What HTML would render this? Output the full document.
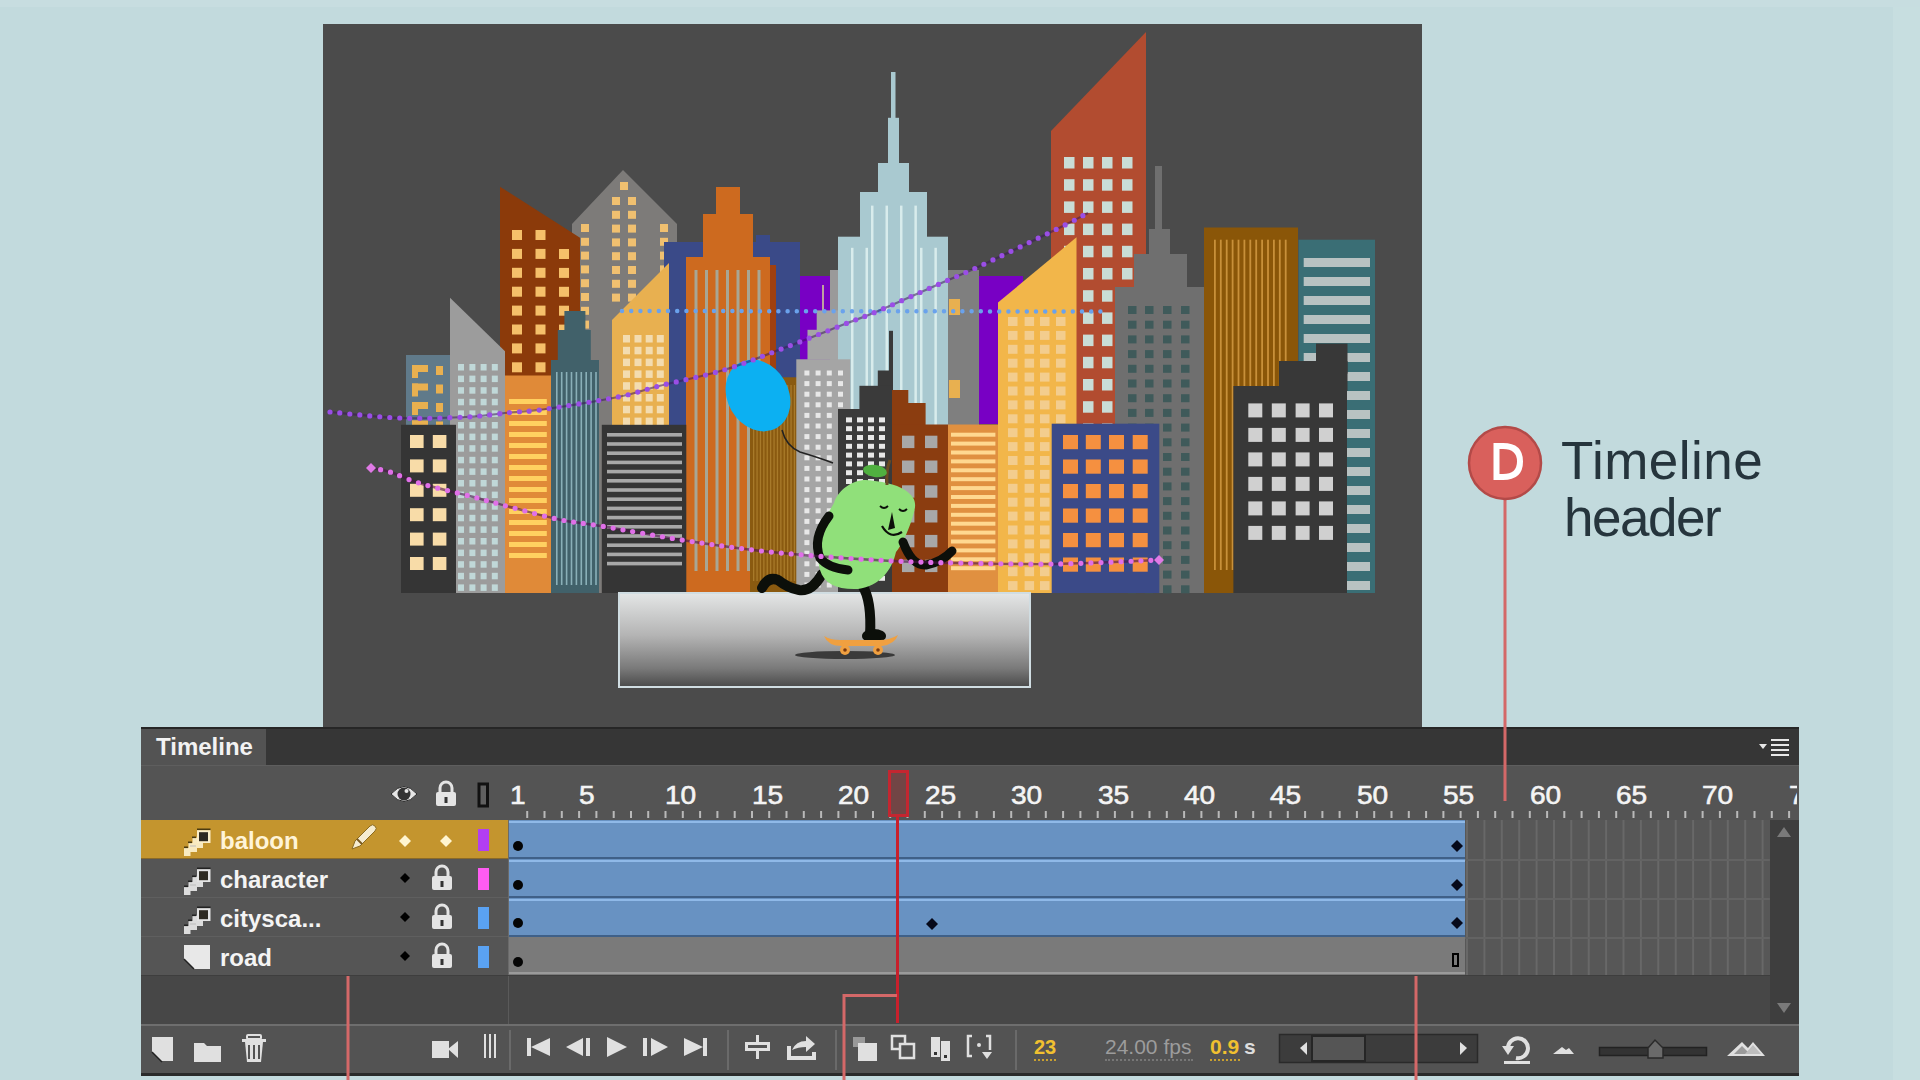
<!DOCTYPE html>
<html><head><meta charset="utf-8">
<style>
html,body{margin:0;padding:0;}
body{width:1920px;height:1080px;overflow:hidden;position:relative;background:#c2dadd;font-family:"Liberation Sans",sans-serif;}
.a{position:absolute;box-sizing:border-box;}
.t{position:absolute;white-space:nowrap;}
</style></head><body>
<svg class="a" style="left:0;top:0" width="1920" height="1080">
<rect x="0" y="0" width="1920" height="1080" fill="#c2dadd"/><rect x="1893" y="0" width="27" height="1080" fill="#c7dee0"/><rect x="0" y="0" width="1920" height="7" fill="#c7dde0"/>
<rect x="323" y="24" width="1099" height="710" fill="#4b4b4b"/>
<polygon points="572.0,224.0 623.0,170.0 677.0,224.0 677.0,593.0 572.0,593.0" fill="#7d7b79"/><rect x="620.0" y="182.0" width="8.0" height="8.0" fill="#f0c070"/><rect x="612.0" y="197.0" width="8.0" height="8.0" fill="#f0c070"/><rect x="628.0" y="197.0" width="8.0" height="8.0" fill="#f0c070"/><rect x="612.0" y="210.8" width="8.0" height="8.0" fill="#f0c070"/><rect x="628.0" y="210.8" width="8.0" height="8.0" fill="#f0c070"/><rect x="612.0" y="224.6" width="8.0" height="8.0" fill="#f0c070"/><rect x="628.0" y="224.6" width="8.0" height="8.0" fill="#f0c070"/><rect x="612.0" y="238.4" width="8.0" height="8.0" fill="#f0c070"/><rect x="628.0" y="238.4" width="8.0" height="8.0" fill="#f0c070"/><rect x="612.0" y="252.2" width="8.0" height="8.0" fill="#f0c070"/><rect x="628.0" y="252.2" width="8.0" height="8.0" fill="#f0c070"/><rect x="612.0" y="266.0" width="8.0" height="8.0" fill="#f0c070"/><rect x="628.0" y="266.0" width="8.0" height="8.0" fill="#f0c070"/><rect x="612.0" y="279.8" width="8.0" height="8.0" fill="#f0c070"/><rect x="628.0" y="279.8" width="8.0" height="8.0" fill="#f0c070"/><rect x="612.0" y="293.6" width="8.0" height="8.0" fill="#f0c070"/><rect x="628.0" y="293.6" width="8.0" height="8.0" fill="#f0c070"/><rect x="581.0" y="224.0" width="8.0" height="8.0" fill="#f0c070"/><rect x="660.0" y="224.0" width="8.0" height="8.0" fill="#f0c070"/><rect x="581.0" y="237.8" width="8.0" height="8.0" fill="#f0c070"/><rect x="660.0" y="237.8" width="8.0" height="8.0" fill="#f0c070"/><rect x="581.0" y="251.6" width="8.0" height="8.0" fill="#f0c070"/><rect x="660.0" y="251.6" width="8.0" height="8.0" fill="#f0c070"/><rect x="581.0" y="265.4" width="8.0" height="8.0" fill="#f0c070"/><rect x="660.0" y="265.4" width="8.0" height="8.0" fill="#f0c070"/><rect x="581.0" y="279.2" width="8.0" height="8.0" fill="#f0c070"/><rect x="660.0" y="279.2" width="8.0" height="8.0" fill="#f0c070"/><rect x="581.0" y="293.0" width="8.0" height="8.0" fill="#f0c070"/><rect x="660.0" y="293.0" width="8.0" height="8.0" fill="#f0c070"/><rect x="581.0" y="306.8" width="8.0" height="8.0" fill="#f0c070"/><rect x="660.0" y="306.8" width="8.0" height="8.0" fill="#f0c070"/><rect x="581.0" y="320.6" width="8.0" height="8.0" fill="#f0c070"/><rect x="660.0" y="320.6" width="8.0" height="8.0" fill="#f0c070"/><polygon points="1051.0,131.0 1146.0,32.0 1146.0,593.0 1051.0,593.0" fill="#b24c30"/><rect x="1064.0" y="157.0" width="10.5" height="11.5" fill="#c9ddd6"/><rect x="1083.0" y="157.0" width="10.5" height="11.5" fill="#c9ddd6"/><rect x="1102.0" y="157.0" width="10.5" height="11.5" fill="#c9ddd6"/><rect x="1122.0" y="157.0" width="10.5" height="11.5" fill="#c9ddd6"/><rect x="1064.0" y="179.2" width="10.5" height="11.5" fill="#c9ddd6"/><rect x="1083.0" y="179.2" width="10.5" height="11.5" fill="#c9ddd6"/><rect x="1102.0" y="179.2" width="10.5" height="11.5" fill="#c9ddd6"/><rect x="1122.0" y="179.2" width="10.5" height="11.5" fill="#c9ddd6"/><rect x="1064.0" y="201.4" width="10.5" height="11.5" fill="#c9ddd6"/><rect x="1083.0" y="201.4" width="10.5" height="11.5" fill="#c9ddd6"/><rect x="1102.0" y="201.4" width="10.5" height="11.5" fill="#c9ddd6"/><rect x="1122.0" y="201.4" width="10.5" height="11.5" fill="#c9ddd6"/><rect x="1064.0" y="223.6" width="10.5" height="11.5" fill="#c9ddd6"/><rect x="1083.0" y="223.6" width="10.5" height="11.5" fill="#c9ddd6"/><rect x="1102.0" y="223.6" width="10.5" height="11.5" fill="#c9ddd6"/><rect x="1122.0" y="223.6" width="10.5" height="11.5" fill="#c9ddd6"/><rect x="1064.0" y="245.8" width="10.5" height="11.5" fill="#c9ddd6"/><rect x="1083.0" y="245.8" width="10.5" height="11.5" fill="#c9ddd6"/><rect x="1102.0" y="245.8" width="10.5" height="11.5" fill="#c9ddd6"/><rect x="1122.0" y="245.8" width="10.5" height="11.5" fill="#c9ddd6"/><rect x="1064.0" y="268.0" width="10.5" height="11.5" fill="#c9ddd6"/><rect x="1083.0" y="268.0" width="10.5" height="11.5" fill="#c9ddd6"/><rect x="1102.0" y="268.0" width="10.5" height="11.5" fill="#c9ddd6"/><rect x="1122.0" y="268.0" width="10.5" height="11.5" fill="#c9ddd6"/><rect x="1064.0" y="290.2" width="10.5" height="11.5" fill="#c9ddd6"/><rect x="1083.0" y="290.2" width="10.5" height="11.5" fill="#c9ddd6"/><rect x="1102.0" y="290.2" width="10.5" height="11.5" fill="#c9ddd6"/><rect x="1122.0" y="290.2" width="10.5" height="11.5" fill="#c9ddd6"/><rect x="1064.0" y="312.4" width="10.5" height="11.5" fill="#c9ddd6"/><rect x="1083.0" y="312.4" width="10.5" height="11.5" fill="#c9ddd6"/><rect x="1102.0" y="312.4" width="10.5" height="11.5" fill="#c9ddd6"/><rect x="1122.0" y="312.4" width="10.5" height="11.5" fill="#c9ddd6"/><rect x="1064.0" y="334.6" width="10.5" height="11.5" fill="#c9ddd6"/><rect x="1083.0" y="334.6" width="10.5" height="11.5" fill="#c9ddd6"/><rect x="1102.0" y="334.6" width="10.5" height="11.5" fill="#c9ddd6"/><rect x="1122.0" y="334.6" width="10.5" height="11.5" fill="#c9ddd6"/><rect x="1064.0" y="356.8" width="10.5" height="11.5" fill="#c9ddd6"/><rect x="1083.0" y="356.8" width="10.5" height="11.5" fill="#c9ddd6"/><rect x="1102.0" y="356.8" width="10.5" height="11.5" fill="#c9ddd6"/><rect x="1122.0" y="356.8" width="10.5" height="11.5" fill="#c9ddd6"/><rect x="1064.0" y="379.0" width="10.5" height="11.5" fill="#c9ddd6"/><rect x="1083.0" y="379.0" width="10.5" height="11.5" fill="#c9ddd6"/><rect x="1102.0" y="379.0" width="10.5" height="11.5" fill="#c9ddd6"/><rect x="1122.0" y="379.0" width="10.5" height="11.5" fill="#c9ddd6"/><rect x="1064.0" y="401.2" width="10.5" height="11.5" fill="#c9ddd6"/><rect x="1083.0" y="401.2" width="10.5" height="11.5" fill="#c9ddd6"/><rect x="1102.0" y="401.2" width="10.5" height="11.5" fill="#c9ddd6"/><rect x="1122.0" y="401.2" width="10.5" height="11.5" fill="#c9ddd6"/><rect x="1064.0" y="423.4" width="10.5" height="11.5" fill="#c9ddd6"/><rect x="1083.0" y="423.4" width="10.5" height="11.5" fill="#c9ddd6"/><rect x="1102.0" y="423.4" width="10.5" height="11.5" fill="#c9ddd6"/><rect x="1122.0" y="423.4" width="10.5" height="11.5" fill="#c9ddd6"/><rect x="1064.0" y="445.6" width="10.5" height="11.5" fill="#c9ddd6"/><rect x="1083.0" y="445.6" width="10.5" height="11.5" fill="#c9ddd6"/><rect x="1102.0" y="445.6" width="10.5" height="11.5" fill="#c9ddd6"/><rect x="1122.0" y="445.6" width="10.5" height="11.5" fill="#c9ddd6"/><rect x="1064.0" y="467.8" width="10.5" height="11.5" fill="#c9ddd6"/><rect x="1083.0" y="467.8" width="10.5" height="11.5" fill="#c9ddd6"/><rect x="1102.0" y="467.8" width="10.5" height="11.5" fill="#c9ddd6"/><rect x="1122.0" y="467.8" width="10.5" height="11.5" fill="#c9ddd6"/><rect x="1064.0" y="490.0" width="10.5" height="11.5" fill="#c9ddd6"/><rect x="1083.0" y="490.0" width="10.5" height="11.5" fill="#c9ddd6"/><rect x="1102.0" y="490.0" width="10.5" height="11.5" fill="#c9ddd6"/><rect x="1122.0" y="490.0" width="10.5" height="11.5" fill="#c9ddd6"/><rect x="1064.0" y="512.2" width="10.5" height="11.5" fill="#c9ddd6"/><rect x="1083.0" y="512.2" width="10.5" height="11.5" fill="#c9ddd6"/><rect x="1102.0" y="512.2" width="10.5" height="11.5" fill="#c9ddd6"/><rect x="1122.0" y="512.2" width="10.5" height="11.5" fill="#c9ddd6"/><rect x="1064.0" y="534.4" width="10.5" height="11.5" fill="#c9ddd6"/><rect x="1083.0" y="534.4" width="10.5" height="11.5" fill="#c9ddd6"/><rect x="1102.0" y="534.4" width="10.5" height="11.5" fill="#c9ddd6"/><rect x="1122.0" y="534.4" width="10.5" height="11.5" fill="#c9ddd6"/><rect x="1064.0" y="556.6" width="10.5" height="11.5" fill="#c9ddd6"/><rect x="1083.0" y="556.6" width="10.5" height="11.5" fill="#c9ddd6"/><rect x="1102.0" y="556.6" width="10.5" height="11.5" fill="#c9ddd6"/><rect x="1122.0" y="556.6" width="10.5" height="11.5" fill="#c9ddd6"/><rect x="1064.0" y="578.8" width="10.5" height="11.5" fill="#c9ddd6"/><rect x="1083.0" y="578.8" width="10.5" height="11.5" fill="#c9ddd6"/><rect x="1102.0" y="578.8" width="10.5" height="11.5" fill="#c9ddd6"/><rect x="1122.0" y="578.8" width="10.5" height="11.5" fill="#c9ddd6"/><rect x="664.0" y="242.0" width="136.0" height="351.0" fill="#3a4a88"/><rect x="756.0" y="235.0" width="14.0" height="10.0" fill="#3a4a88"/><rect x="800.0" y="276.0" width="30.0" height="317.0" fill="#7800c4"/><rect x="979.0" y="276.0" width="44.0" height="148.0" fill="#7800c4"/><rect x="948.0" y="270.0" width="31.0" height="155.0" fill="#7f7f7f"/><rect x="949.0" y="299.0" width="11.0" height="16.0" fill="#e8b050"/><rect x="949.0" y="380.0" width="11.0" height="18.0" fill="#e8b050"/><rect x="830.0" y="270.0" width="8.0" height="90.0" fill="#9a9a9a"/><rect x="891.0" y="72.0" width="4.5" height="46.0" fill="#a9c9d0"/><rect x="888.0" y="117.8" width="11.0" height="46.0" fill="#a9c9d0"/><rect x="878.0" y="163.0" width="31.0" height="30.0" fill="#a9c9d0"/><rect x="860.0" y="192.0" width="67.0" height="45.0" fill="#a9c9d0"/><rect x="838.0" y="236.7" width="110.0" height="356.3" fill="#a9c9d0"/><rect x="871.0" y="205.6" width="2.5" height="387.4" fill="#d8ecec"/><rect x="885.5" y="205.6" width="2.5" height="387.4" fill="#d8ecec"/><rect x="900.0" y="205.6" width="2.5" height="387.4" fill="#d8ecec"/><rect x="914.4" y="205.6" width="2.5" height="387.4" fill="#d8ecec"/><rect x="851.0" y="247.8" width="2.5" height="345.2" fill="#d8ecec"/><rect x="865.5" y="247.8" width="2.5" height="345.2" fill="#d8ecec"/><rect x="920.0" y="247.8" width="2.5" height="345.2" fill="#d8ecec"/><rect x="934.4" y="247.8" width="2.5" height="345.2" fill="#d8ecec"/><rect x="716.0" y="187.0" width="24.0" height="30.0" fill="#cd6a1f"/><rect x="703.0" y="214.0" width="50.0" height="45.0" fill="#cd6a1f"/><rect x="686.0" y="257.0" width="84.0" height="336.0" fill="#cd6a1f"/><rect x="770.0" y="265.0" width="6.0" height="328.0" fill="#a0400f"/><rect x="694.5" y="270.0" width="3.0" height="301.0" fill="#a8a694"/><rect x="705.0" y="270.0" width="3.0" height="301.0" fill="#a8a694"/><rect x="715.5" y="270.0" width="3.0" height="301.0" fill="#a8a694"/><rect x="726.0" y="270.0" width="3.0" height="301.0" fill="#a8a694"/><rect x="736.5" y="270.0" width="3.0" height="301.0" fill="#a8a694"/><rect x="747.0" y="270.0" width="3.0" height="301.0" fill="#a8a694"/><rect x="757.5" y="270.0" width="3.0" height="301.0" fill="#a8a694"/><rect x="1155.0" y="166.0" width="7.0" height="64.0" fill="#6f6f6f"/><rect x="1149.0" y="229.0" width="21.0" height="26.0" fill="#6f6f6f"/><rect x="1134.0" y="254.0" width="53.0" height="34.0" fill="#6f6f6f"/><rect x="1115.0" y="287.0" width="89.0" height="306.0" fill="#6f6f6f"/><rect x="1128.0" y="306.0" width="8.5" height="8.0" fill="#3f5a5a"/><rect x="1145.0" y="306.0" width="8.5" height="8.0" fill="#3f5a5a"/><rect x="1163.0" y="306.0" width="8.5" height="8.0" fill="#3f5a5a"/><rect x="1181.0" y="306.0" width="8.5" height="8.0" fill="#3f5a5a"/><rect x="1128.0" y="320.7" width="8.5" height="8.0" fill="#3f5a5a"/><rect x="1145.0" y="320.7" width="8.5" height="8.0" fill="#3f5a5a"/><rect x="1163.0" y="320.7" width="8.5" height="8.0" fill="#3f5a5a"/><rect x="1181.0" y="320.7" width="8.5" height="8.0" fill="#3f5a5a"/><rect x="1128.0" y="335.4" width="8.5" height="8.0" fill="#3f5a5a"/><rect x="1145.0" y="335.4" width="8.5" height="8.0" fill="#3f5a5a"/><rect x="1163.0" y="335.4" width="8.5" height="8.0" fill="#3f5a5a"/><rect x="1181.0" y="335.4" width="8.5" height="8.0" fill="#3f5a5a"/><rect x="1128.0" y="350.1" width="8.5" height="8.0" fill="#3f5a5a"/><rect x="1145.0" y="350.1" width="8.5" height="8.0" fill="#3f5a5a"/><rect x="1163.0" y="350.1" width="8.5" height="8.0" fill="#3f5a5a"/><rect x="1181.0" y="350.1" width="8.5" height="8.0" fill="#3f5a5a"/><rect x="1128.0" y="364.8" width="8.5" height="8.0" fill="#3f5a5a"/><rect x="1145.0" y="364.8" width="8.5" height="8.0" fill="#3f5a5a"/><rect x="1163.0" y="364.8" width="8.5" height="8.0" fill="#3f5a5a"/><rect x="1181.0" y="364.8" width="8.5" height="8.0" fill="#3f5a5a"/><rect x="1128.0" y="379.5" width="8.5" height="8.0" fill="#3f5a5a"/><rect x="1145.0" y="379.5" width="8.5" height="8.0" fill="#3f5a5a"/><rect x="1163.0" y="379.5" width="8.5" height="8.0" fill="#3f5a5a"/><rect x="1181.0" y="379.5" width="8.5" height="8.0" fill="#3f5a5a"/><rect x="1128.0" y="394.2" width="8.5" height="8.0" fill="#3f5a5a"/><rect x="1145.0" y="394.2" width="8.5" height="8.0" fill="#3f5a5a"/><rect x="1163.0" y="394.2" width="8.5" height="8.0" fill="#3f5a5a"/><rect x="1181.0" y="394.2" width="8.5" height="8.0" fill="#3f5a5a"/><rect x="1128.0" y="408.9" width="8.5" height="8.0" fill="#3f5a5a"/><rect x="1145.0" y="408.9" width="8.5" height="8.0" fill="#3f5a5a"/><rect x="1163.0" y="408.9" width="8.5" height="8.0" fill="#3f5a5a"/><rect x="1181.0" y="408.9" width="8.5" height="8.0" fill="#3f5a5a"/><rect x="1128.0" y="423.6" width="8.5" height="8.0" fill="#3f5a5a"/><rect x="1145.0" y="423.6" width="8.5" height="8.0" fill="#3f5a5a"/><rect x="1163.0" y="423.6" width="8.5" height="8.0" fill="#3f5a5a"/><rect x="1181.0" y="423.6" width="8.5" height="8.0" fill="#3f5a5a"/><rect x="1128.0" y="438.3" width="8.5" height="8.0" fill="#3f5a5a"/><rect x="1145.0" y="438.3" width="8.5" height="8.0" fill="#3f5a5a"/><rect x="1163.0" y="438.3" width="8.5" height="8.0" fill="#3f5a5a"/><rect x="1181.0" y="438.3" width="8.5" height="8.0" fill="#3f5a5a"/><rect x="1128.0" y="453.0" width="8.5" height="8.0" fill="#3f5a5a"/><rect x="1145.0" y="453.0" width="8.5" height="8.0" fill="#3f5a5a"/><rect x="1163.0" y="453.0" width="8.5" height="8.0" fill="#3f5a5a"/><rect x="1181.0" y="453.0" width="8.5" height="8.0" fill="#3f5a5a"/><rect x="1128.0" y="467.7" width="8.5" height="8.0" fill="#3f5a5a"/><rect x="1145.0" y="467.7" width="8.5" height="8.0" fill="#3f5a5a"/><rect x="1163.0" y="467.7" width="8.5" height="8.0" fill="#3f5a5a"/><rect x="1181.0" y="467.7" width="8.5" height="8.0" fill="#3f5a5a"/><rect x="1128.0" y="482.4" width="8.5" height="8.0" fill="#3f5a5a"/><rect x="1145.0" y="482.4" width="8.5" height="8.0" fill="#3f5a5a"/><rect x="1163.0" y="482.4" width="8.5" height="8.0" fill="#3f5a5a"/><rect x="1181.0" y="482.4" width="8.5" height="8.0" fill="#3f5a5a"/><rect x="1128.0" y="497.1" width="8.5" height="8.0" fill="#3f5a5a"/><rect x="1145.0" y="497.1" width="8.5" height="8.0" fill="#3f5a5a"/><rect x="1163.0" y="497.1" width="8.5" height="8.0" fill="#3f5a5a"/><rect x="1181.0" y="497.1" width="8.5" height="8.0" fill="#3f5a5a"/><rect x="1128.0" y="511.8" width="8.5" height="8.0" fill="#3f5a5a"/><rect x="1145.0" y="511.8" width="8.5" height="8.0" fill="#3f5a5a"/><rect x="1163.0" y="511.8" width="8.5" height="8.0" fill="#3f5a5a"/><rect x="1181.0" y="511.8" width="8.5" height="8.0" fill="#3f5a5a"/><rect x="1128.0" y="526.5" width="8.5" height="8.0" fill="#3f5a5a"/><rect x="1145.0" y="526.5" width="8.5" height="8.0" fill="#3f5a5a"/><rect x="1163.0" y="526.5" width="8.5" height="8.0" fill="#3f5a5a"/><rect x="1181.0" y="526.5" width="8.5" height="8.0" fill="#3f5a5a"/><rect x="1128.0" y="541.2" width="8.5" height="8.0" fill="#3f5a5a"/><rect x="1145.0" y="541.2" width="8.5" height="8.0" fill="#3f5a5a"/><rect x="1163.0" y="541.2" width="8.5" height="8.0" fill="#3f5a5a"/><rect x="1181.0" y="541.2" width="8.5" height="8.0" fill="#3f5a5a"/><rect x="1128.0" y="555.9" width="8.5" height="8.0" fill="#3f5a5a"/><rect x="1145.0" y="555.9" width="8.5" height="8.0" fill="#3f5a5a"/><rect x="1163.0" y="555.9" width="8.5" height="8.0" fill="#3f5a5a"/><rect x="1181.0" y="555.9" width="8.5" height="8.0" fill="#3f5a5a"/><rect x="1128.0" y="570.6" width="8.5" height="8.0" fill="#3f5a5a"/><rect x="1145.0" y="570.6" width="8.5" height="8.0" fill="#3f5a5a"/><rect x="1163.0" y="570.6" width="8.5" height="8.0" fill="#3f5a5a"/><rect x="1181.0" y="570.6" width="8.5" height="8.0" fill="#3f5a5a"/><rect x="1128.0" y="585.3" width="8.5" height="8.0" fill="#3f5a5a"/><rect x="1145.0" y="585.3" width="8.5" height="8.0" fill="#3f5a5a"/><rect x="1163.0" y="585.3" width="8.5" height="8.0" fill="#3f5a5a"/><rect x="1181.0" y="585.3" width="8.5" height="8.0" fill="#3f5a5a"/><polygon points="998.0,302.5 1076.5,237.3 1076.5,593.0 998.0,593.0" fill="#f2b64a"/><rect x="1008.0" y="317.0" width="9.5" height="9.0" fill="#f3cd8e"/><rect x="1024.6" y="317.0" width="9.5" height="9.0" fill="#f3cd8e"/><rect x="1040.0" y="317.0" width="9.5" height="9.0" fill="#f3cd8e"/><rect x="1056.0" y="317.0" width="9.5" height="9.0" fill="#f3cd8e"/><rect x="1008.0" y="330.9" width="9.5" height="9.0" fill="#f3cd8e"/><rect x="1024.6" y="330.9" width="9.5" height="9.0" fill="#f3cd8e"/><rect x="1040.0" y="330.9" width="9.5" height="9.0" fill="#f3cd8e"/><rect x="1056.0" y="330.9" width="9.5" height="9.0" fill="#f3cd8e"/><rect x="1008.0" y="344.8" width="9.5" height="9.0" fill="#f3cd8e"/><rect x="1024.6" y="344.8" width="9.5" height="9.0" fill="#f3cd8e"/><rect x="1040.0" y="344.8" width="9.5" height="9.0" fill="#f3cd8e"/><rect x="1056.0" y="344.8" width="9.5" height="9.0" fill="#f3cd8e"/><rect x="1008.0" y="358.7" width="9.5" height="9.0" fill="#f3cd8e"/><rect x="1024.6" y="358.7" width="9.5" height="9.0" fill="#f3cd8e"/><rect x="1040.0" y="358.7" width="9.5" height="9.0" fill="#f3cd8e"/><rect x="1056.0" y="358.7" width="9.5" height="9.0" fill="#f3cd8e"/><rect x="1008.0" y="372.6" width="9.5" height="9.0" fill="#f3cd8e"/><rect x="1024.6" y="372.6" width="9.5" height="9.0" fill="#f3cd8e"/><rect x="1040.0" y="372.6" width="9.5" height="9.0" fill="#f3cd8e"/><rect x="1056.0" y="372.6" width="9.5" height="9.0" fill="#f3cd8e"/><rect x="1008.0" y="386.5" width="9.5" height="9.0" fill="#f3cd8e"/><rect x="1024.6" y="386.5" width="9.5" height="9.0" fill="#f3cd8e"/><rect x="1040.0" y="386.5" width="9.5" height="9.0" fill="#f3cd8e"/><rect x="1056.0" y="386.5" width="9.5" height="9.0" fill="#f3cd8e"/><rect x="1008.0" y="400.4" width="9.5" height="9.0" fill="#f3cd8e"/><rect x="1024.6" y="400.4" width="9.5" height="9.0" fill="#f3cd8e"/><rect x="1040.0" y="400.4" width="9.5" height="9.0" fill="#f3cd8e"/><rect x="1056.0" y="400.4" width="9.5" height="9.0" fill="#f3cd8e"/><rect x="1008.0" y="414.3" width="9.5" height="9.0" fill="#f3cd8e"/><rect x="1024.6" y="414.3" width="9.5" height="9.0" fill="#f3cd8e"/><rect x="1040.0" y="414.3" width="9.5" height="9.0" fill="#f3cd8e"/><rect x="1056.0" y="414.3" width="9.5" height="9.0" fill="#f3cd8e"/><rect x="1008.0" y="428.2" width="9.5" height="9.0" fill="#f3cd8e"/><rect x="1024.6" y="428.2" width="9.5" height="9.0" fill="#f3cd8e"/><rect x="1040.0" y="428.2" width="9.5" height="9.0" fill="#f3cd8e"/><rect x="1056.0" y="428.2" width="9.5" height="9.0" fill="#f3cd8e"/><rect x="1008.0" y="442.1" width="9.5" height="9.0" fill="#f3cd8e"/><rect x="1024.6" y="442.1" width="9.5" height="9.0" fill="#f3cd8e"/><rect x="1040.0" y="442.1" width="9.5" height="9.0" fill="#f3cd8e"/><rect x="1056.0" y="442.1" width="9.5" height="9.0" fill="#f3cd8e"/><rect x="1008.0" y="456.0" width="9.5" height="9.0" fill="#f3cd8e"/><rect x="1024.6" y="456.0" width="9.5" height="9.0" fill="#f3cd8e"/><rect x="1040.0" y="456.0" width="9.5" height="9.0" fill="#f3cd8e"/><rect x="1056.0" y="456.0" width="9.5" height="9.0" fill="#f3cd8e"/><rect x="1008.0" y="469.9" width="9.5" height="9.0" fill="#f3cd8e"/><rect x="1024.6" y="469.9" width="9.5" height="9.0" fill="#f3cd8e"/><rect x="1040.0" y="469.9" width="9.5" height="9.0" fill="#f3cd8e"/><rect x="1056.0" y="469.9" width="9.5" height="9.0" fill="#f3cd8e"/><rect x="1008.0" y="483.8" width="9.5" height="9.0" fill="#f3cd8e"/><rect x="1024.6" y="483.8" width="9.5" height="9.0" fill="#f3cd8e"/><rect x="1040.0" y="483.8" width="9.5" height="9.0" fill="#f3cd8e"/><rect x="1056.0" y="483.8" width="9.5" height="9.0" fill="#f3cd8e"/><rect x="1008.0" y="497.7" width="9.5" height="9.0" fill="#f3cd8e"/><rect x="1024.6" y="497.7" width="9.5" height="9.0" fill="#f3cd8e"/><rect x="1040.0" y="497.7" width="9.5" height="9.0" fill="#f3cd8e"/><rect x="1056.0" y="497.7" width="9.5" height="9.0" fill="#f3cd8e"/><rect x="1008.0" y="511.6" width="9.5" height="9.0" fill="#f3cd8e"/><rect x="1024.6" y="511.6" width="9.5" height="9.0" fill="#f3cd8e"/><rect x="1040.0" y="511.6" width="9.5" height="9.0" fill="#f3cd8e"/><rect x="1056.0" y="511.6" width="9.5" height="9.0" fill="#f3cd8e"/><rect x="1008.0" y="525.5" width="9.5" height="9.0" fill="#f3cd8e"/><rect x="1024.6" y="525.5" width="9.5" height="9.0" fill="#f3cd8e"/><rect x="1040.0" y="525.5" width="9.5" height="9.0" fill="#f3cd8e"/><rect x="1056.0" y="525.5" width="9.5" height="9.0" fill="#f3cd8e"/><rect x="1008.0" y="539.4" width="9.5" height="9.0" fill="#f3cd8e"/><rect x="1024.6" y="539.4" width="9.5" height="9.0" fill="#f3cd8e"/><rect x="1040.0" y="539.4" width="9.5" height="9.0" fill="#f3cd8e"/><rect x="1056.0" y="539.4" width="9.5" height="9.0" fill="#f3cd8e"/><rect x="1008.0" y="553.3" width="9.5" height="9.0" fill="#f3cd8e"/><rect x="1024.6" y="553.3" width="9.5" height="9.0" fill="#f3cd8e"/><rect x="1040.0" y="553.3" width="9.5" height="9.0" fill="#f3cd8e"/><rect x="1056.0" y="553.3" width="9.5" height="9.0" fill="#f3cd8e"/><rect x="1008.0" y="567.2" width="9.5" height="9.0" fill="#f3cd8e"/><rect x="1024.6" y="567.2" width="9.5" height="9.0" fill="#f3cd8e"/><rect x="1040.0" y="567.2" width="9.5" height="9.0" fill="#f3cd8e"/><rect x="1056.0" y="567.2" width="9.5" height="9.0" fill="#f3cd8e"/><rect x="1008.0" y="581.1" width="9.5" height="9.0" fill="#f3cd8e"/><rect x="1024.6" y="581.1" width="9.5" height="9.0" fill="#f3cd8e"/><rect x="1040.0" y="581.1" width="9.5" height="9.0" fill="#f3cd8e"/><rect x="1056.0" y="581.1" width="9.5" height="9.0" fill="#f3cd8e"/><rect x="1204.0" y="227.5" width="94.0" height="365.5" fill="#8a5608"/><rect x="1214.0" y="239.7" width="1.8" height="330.3" fill="#c8903a"/><rect x="1219.9" y="239.7" width="1.8" height="330.3" fill="#c8903a"/><rect x="1225.8" y="239.7" width="1.8" height="330.3" fill="#c8903a"/><rect x="1231.7" y="239.7" width="1.8" height="330.3" fill="#c8903a"/><rect x="1237.6" y="239.7" width="1.8" height="330.3" fill="#c8903a"/><rect x="1243.5" y="239.7" width="1.8" height="330.3" fill="#c8903a"/><rect x="1249.4" y="239.7" width="1.8" height="330.3" fill="#c8903a"/><rect x="1255.3" y="239.7" width="1.8" height="330.3" fill="#c8903a"/><rect x="1261.2" y="239.7" width="1.8" height="330.3" fill="#c8903a"/><rect x="1267.1" y="239.7" width="1.8" height="330.3" fill="#c8903a"/><rect x="1273.0" y="239.7" width="1.8" height="330.3" fill="#c8903a"/><rect x="1278.9" y="239.7" width="1.8" height="330.3" fill="#c8903a"/><rect x="1284.8" y="239.7" width="1.8" height="330.3" fill="#c8903a"/><rect x="1298.6" y="239.7" width="76.4" height="353.3" fill="#3a6e75"/><rect x="1303.7" y="258.0" width="66.3" height="9.0" fill="#b8c2c2"/><rect x="1303.7" y="277.0" width="66.3" height="9.0" fill="#b8c2c2"/><rect x="1303.7" y="296.0" width="66.3" height="9.0" fill="#b8c2c2"/><rect x="1303.7" y="315.0" width="66.3" height="9.0" fill="#b8c2c2"/><rect x="1303.7" y="334.0" width="66.3" height="9.0" fill="#b8c2c2"/><rect x="1303.7" y="353.0" width="66.3" height="9.0" fill="#b8c2c2"/><rect x="1303.7" y="372.0" width="66.3" height="9.0" fill="#b8c2c2"/><rect x="1303.7" y="391.0" width="66.3" height="9.0" fill="#b8c2c2"/><rect x="1303.7" y="410.0" width="66.3" height="9.0" fill="#b8c2c2"/><rect x="1303.7" y="429.0" width="66.3" height="9.0" fill="#b8c2c2"/><rect x="1303.7" y="448.0" width="66.3" height="9.0" fill="#b8c2c2"/><rect x="1303.7" y="467.0" width="66.3" height="9.0" fill="#b8c2c2"/><rect x="1303.7" y="486.0" width="66.3" height="9.0" fill="#b8c2c2"/><rect x="1303.7" y="505.0" width="66.3" height="9.0" fill="#b8c2c2"/><rect x="1303.7" y="524.0" width="66.3" height="9.0" fill="#b8c2c2"/><rect x="1303.7" y="543.0" width="66.3" height="9.0" fill="#b8c2c2"/><rect x="1303.7" y="562.0" width="66.3" height="9.0" fill="#b8c2c2"/><rect x="1303.7" y="581.0" width="66.3" height="9.0" fill="#b8c2c2"/><rect x="1316.0" y="343.6" width="31.5" height="30.0" fill="#383838"/><rect x="1279.0" y="361.0" width="68.5" height="30.0" fill="#383838"/><rect x="1233.4" y="386.0" width="113.6" height="207.0" fill="#383838"/><rect x="1248.3" y="403.4" width="14.0" height="14.0" fill="#d0d0d0"/><rect x="1271.8" y="403.4" width="14.0" height="14.0" fill="#d0d0d0"/><rect x="1295.6" y="403.4" width="14.0" height="14.0" fill="#d0d0d0"/><rect x="1319.0" y="403.4" width="14.0" height="14.0" fill="#d0d0d0"/><rect x="1248.3" y="427.9" width="14.0" height="14.0" fill="#d0d0d0"/><rect x="1271.8" y="427.9" width="14.0" height="14.0" fill="#d0d0d0"/><rect x="1295.6" y="427.9" width="14.0" height="14.0" fill="#d0d0d0"/><rect x="1319.0" y="427.9" width="14.0" height="14.0" fill="#d0d0d0"/><rect x="1248.3" y="452.4" width="14.0" height="14.0" fill="#d0d0d0"/><rect x="1271.8" y="452.4" width="14.0" height="14.0" fill="#d0d0d0"/><rect x="1295.6" y="452.4" width="14.0" height="14.0" fill="#d0d0d0"/><rect x="1319.0" y="452.4" width="14.0" height="14.0" fill="#d0d0d0"/><rect x="1248.3" y="476.9" width="14.0" height="14.0" fill="#d0d0d0"/><rect x="1271.8" y="476.9" width="14.0" height="14.0" fill="#d0d0d0"/><rect x="1295.6" y="476.9" width="14.0" height="14.0" fill="#d0d0d0"/><rect x="1319.0" y="476.9" width="14.0" height="14.0" fill="#d0d0d0"/><rect x="1248.3" y="501.4" width="14.0" height="14.0" fill="#d0d0d0"/><rect x="1271.8" y="501.4" width="14.0" height="14.0" fill="#d0d0d0"/><rect x="1295.6" y="501.4" width="14.0" height="14.0" fill="#d0d0d0"/><rect x="1319.0" y="501.4" width="14.0" height="14.0" fill="#d0d0d0"/><rect x="1248.3" y="525.9" width="14.0" height="14.0" fill="#d0d0d0"/><rect x="1271.8" y="525.9" width="14.0" height="14.0" fill="#d0d0d0"/><rect x="1295.6" y="525.9" width="14.0" height="14.0" fill="#d0d0d0"/><rect x="1319.0" y="525.9" width="14.0" height="14.0" fill="#d0d0d0"/><rect x="1051.7" y="423.7" width="107.6" height="169.3" fill="#3b4a88"/><rect x="1063.0" y="435.0" width="15.0" height="14.2" fill="#f59040"/><rect x="1085.8" y="435.0" width="15.0" height="14.2" fill="#f59040"/><rect x="1109.0" y="435.0" width="15.0" height="14.2" fill="#f59040"/><rect x="1132.7" y="435.0" width="15.0" height="14.2" fill="#f59040"/><rect x="1063.0" y="459.5" width="15.0" height="14.2" fill="#f59040"/><rect x="1085.8" y="459.5" width="15.0" height="14.2" fill="#f59040"/><rect x="1109.0" y="459.5" width="15.0" height="14.2" fill="#f59040"/><rect x="1132.7" y="459.5" width="15.0" height="14.2" fill="#f59040"/><rect x="1063.0" y="484.0" width="15.0" height="14.2" fill="#f59040"/><rect x="1085.8" y="484.0" width="15.0" height="14.2" fill="#f59040"/><rect x="1109.0" y="484.0" width="15.0" height="14.2" fill="#f59040"/><rect x="1132.7" y="484.0" width="15.0" height="14.2" fill="#f59040"/><rect x="1063.0" y="508.5" width="15.0" height="14.2" fill="#f59040"/><rect x="1085.8" y="508.5" width="15.0" height="14.2" fill="#f59040"/><rect x="1109.0" y="508.5" width="15.0" height="14.2" fill="#f59040"/><rect x="1132.7" y="508.5" width="15.0" height="14.2" fill="#f59040"/><rect x="1063.0" y="533.0" width="15.0" height="14.2" fill="#f59040"/><rect x="1085.8" y="533.0" width="15.0" height="14.2" fill="#f59040"/><rect x="1109.0" y="533.0" width="15.0" height="14.2" fill="#f59040"/><rect x="1132.7" y="533.0" width="15.0" height="14.2" fill="#f59040"/><rect x="1063.0" y="557.5" width="15.0" height="14.2" fill="#f59040"/><rect x="1085.8" y="557.5" width="15.0" height="14.2" fill="#f59040"/><rect x="1109.0" y="557.5" width="15.0" height="14.2" fill="#f59040"/><rect x="1132.7" y="557.5" width="15.0" height="14.2" fill="#f59040"/><polygon points="500.0,186.7 580.0,237.8 580.0,593.0 500.0,593.0" fill="#8b3a0a"/><rect x="512.0" y="230.0" width="10.0" height="10.0" fill="#f5c06a"/><rect x="535.5" y="230.0" width="10.0" height="10.0" fill="#f5c06a"/><rect x="512.0" y="248.9" width="10.0" height="10.0" fill="#f5c06a"/><rect x="535.5" y="248.9" width="10.0" height="10.0" fill="#f5c06a"/><rect x="512.0" y="267.8" width="10.0" height="10.0" fill="#f5c06a"/><rect x="535.5" y="267.8" width="10.0" height="10.0" fill="#f5c06a"/><rect x="512.0" y="286.7" width="10.0" height="10.0" fill="#f5c06a"/><rect x="535.5" y="286.7" width="10.0" height="10.0" fill="#f5c06a"/><rect x="512.0" y="305.6" width="10.0" height="10.0" fill="#f5c06a"/><rect x="535.5" y="305.6" width="10.0" height="10.0" fill="#f5c06a"/><rect x="512.0" y="324.5" width="10.0" height="10.0" fill="#f5c06a"/><rect x="535.5" y="324.5" width="10.0" height="10.0" fill="#f5c06a"/><rect x="512.0" y="343.4" width="10.0" height="10.0" fill="#f5c06a"/><rect x="535.5" y="343.4" width="10.0" height="10.0" fill="#f5c06a"/><rect x="512.0" y="362.3" width="10.0" height="10.0" fill="#f5c06a"/><rect x="535.5" y="362.3" width="10.0" height="10.0" fill="#f5c06a"/><rect x="512.0" y="381.2" width="10.0" height="10.0" fill="#f5c06a"/><rect x="535.5" y="381.2" width="10.0" height="10.0" fill="#f5c06a"/><rect x="559.0" y="249.0" width="10.0" height="10.0" fill="#f5c06a"/><rect x="559.0" y="267.9" width="10.0" height="10.0" fill="#f5c06a"/><rect x="559.0" y="286.8" width="10.0" height="10.0" fill="#f5c06a"/><rect x="559.0" y="305.7" width="10.0" height="10.0" fill="#f5c06a"/><rect x="559.0" y="324.6" width="10.0" height="10.0" fill="#f5c06a"/><rect x="559.0" y="343.5" width="10.0" height="10.0" fill="#f5c06a"/><rect x="559.0" y="362.4" width="10.0" height="10.0" fill="#f5c06a"/><polygon points="450.0,297.7 505.0,351.3 505.0,593.0 450.0,593.0" fill="#9c9c9c"/><rect x="458.0" y="364.0" width="6.0" height="6.5" fill="#c0d8d8"/><rect x="469.4" y="364.0" width="6.0" height="6.5" fill="#c0d8d8"/><rect x="480.6" y="364.0" width="6.0" height="6.5" fill="#c0d8d8"/><rect x="491.8" y="364.0" width="6.0" height="6.5" fill="#c0d8d8"/><rect x="458.0" y="375.6" width="6.0" height="6.5" fill="#c0d8d8"/><rect x="469.4" y="375.6" width="6.0" height="6.5" fill="#c0d8d8"/><rect x="480.6" y="375.6" width="6.0" height="6.5" fill="#c0d8d8"/><rect x="491.8" y="375.6" width="6.0" height="6.5" fill="#c0d8d8"/><rect x="458.0" y="387.2" width="6.0" height="6.5" fill="#c0d8d8"/><rect x="469.4" y="387.2" width="6.0" height="6.5" fill="#c0d8d8"/><rect x="480.6" y="387.2" width="6.0" height="6.5" fill="#c0d8d8"/><rect x="491.8" y="387.2" width="6.0" height="6.5" fill="#c0d8d8"/><rect x="458.0" y="398.8" width="6.0" height="6.5" fill="#c0d8d8"/><rect x="469.4" y="398.8" width="6.0" height="6.5" fill="#c0d8d8"/><rect x="480.6" y="398.8" width="6.0" height="6.5" fill="#c0d8d8"/><rect x="491.8" y="398.8" width="6.0" height="6.5" fill="#c0d8d8"/><rect x="458.0" y="410.4" width="6.0" height="6.5" fill="#c0d8d8"/><rect x="469.4" y="410.4" width="6.0" height="6.5" fill="#c0d8d8"/><rect x="480.6" y="410.4" width="6.0" height="6.5" fill="#c0d8d8"/><rect x="491.8" y="410.4" width="6.0" height="6.5" fill="#c0d8d8"/><rect x="458.0" y="422.0" width="6.0" height="6.5" fill="#c0d8d8"/><rect x="469.4" y="422.0" width="6.0" height="6.5" fill="#c0d8d8"/><rect x="480.6" y="422.0" width="6.0" height="6.5" fill="#c0d8d8"/><rect x="491.8" y="422.0" width="6.0" height="6.5" fill="#c0d8d8"/><rect x="458.0" y="433.6" width="6.0" height="6.5" fill="#c0d8d8"/><rect x="469.4" y="433.6" width="6.0" height="6.5" fill="#c0d8d8"/><rect x="480.6" y="433.6" width="6.0" height="6.5" fill="#c0d8d8"/><rect x="491.8" y="433.6" width="6.0" height="6.5" fill="#c0d8d8"/><rect x="458.0" y="445.2" width="6.0" height="6.5" fill="#c0d8d8"/><rect x="469.4" y="445.2" width="6.0" height="6.5" fill="#c0d8d8"/><rect x="480.6" y="445.2" width="6.0" height="6.5" fill="#c0d8d8"/><rect x="491.8" y="445.2" width="6.0" height="6.5" fill="#c0d8d8"/><rect x="458.0" y="456.8" width="6.0" height="6.5" fill="#c0d8d8"/><rect x="469.4" y="456.8" width="6.0" height="6.5" fill="#c0d8d8"/><rect x="480.6" y="456.8" width="6.0" height="6.5" fill="#c0d8d8"/><rect x="491.8" y="456.8" width="6.0" height="6.5" fill="#c0d8d8"/><rect x="458.0" y="468.4" width="6.0" height="6.5" fill="#c0d8d8"/><rect x="469.4" y="468.4" width="6.0" height="6.5" fill="#c0d8d8"/><rect x="480.6" y="468.4" width="6.0" height="6.5" fill="#c0d8d8"/><rect x="491.8" y="468.4" width="6.0" height="6.5" fill="#c0d8d8"/><rect x="458.0" y="480.0" width="6.0" height="6.5" fill="#c0d8d8"/><rect x="469.4" y="480.0" width="6.0" height="6.5" fill="#c0d8d8"/><rect x="480.6" y="480.0" width="6.0" height="6.5" fill="#c0d8d8"/><rect x="491.8" y="480.0" width="6.0" height="6.5" fill="#c0d8d8"/><rect x="458.0" y="491.6" width="6.0" height="6.5" fill="#c0d8d8"/><rect x="469.4" y="491.6" width="6.0" height="6.5" fill="#c0d8d8"/><rect x="480.6" y="491.6" width="6.0" height="6.5" fill="#c0d8d8"/><rect x="491.8" y="491.6" width="6.0" height="6.5" fill="#c0d8d8"/><rect x="458.0" y="503.2" width="6.0" height="6.5" fill="#c0d8d8"/><rect x="469.4" y="503.2" width="6.0" height="6.5" fill="#c0d8d8"/><rect x="480.6" y="503.2" width="6.0" height="6.5" fill="#c0d8d8"/><rect x="491.8" y="503.2" width="6.0" height="6.5" fill="#c0d8d8"/><rect x="458.0" y="514.8" width="6.0" height="6.5" fill="#c0d8d8"/><rect x="469.4" y="514.8" width="6.0" height="6.5" fill="#c0d8d8"/><rect x="480.6" y="514.8" width="6.0" height="6.5" fill="#c0d8d8"/><rect x="491.8" y="514.8" width="6.0" height="6.5" fill="#c0d8d8"/><rect x="458.0" y="526.4" width="6.0" height="6.5" fill="#c0d8d8"/><rect x="469.4" y="526.4" width="6.0" height="6.5" fill="#c0d8d8"/><rect x="480.6" y="526.4" width="6.0" height="6.5" fill="#c0d8d8"/><rect x="491.8" y="526.4" width="6.0" height="6.5" fill="#c0d8d8"/><rect x="458.0" y="538.0" width="6.0" height="6.5" fill="#c0d8d8"/><rect x="469.4" y="538.0" width="6.0" height="6.5" fill="#c0d8d8"/><rect x="480.6" y="538.0" width="6.0" height="6.5" fill="#c0d8d8"/><rect x="491.8" y="538.0" width="6.0" height="6.5" fill="#c0d8d8"/><rect x="458.0" y="549.6" width="6.0" height="6.5" fill="#c0d8d8"/><rect x="469.4" y="549.6" width="6.0" height="6.5" fill="#c0d8d8"/><rect x="480.6" y="549.6" width="6.0" height="6.5" fill="#c0d8d8"/><rect x="491.8" y="549.6" width="6.0" height="6.5" fill="#c0d8d8"/><rect x="458.0" y="561.2" width="6.0" height="6.5" fill="#c0d8d8"/><rect x="469.4" y="561.2" width="6.0" height="6.5" fill="#c0d8d8"/><rect x="480.6" y="561.2" width="6.0" height="6.5" fill="#c0d8d8"/><rect x="491.8" y="561.2" width="6.0" height="6.5" fill="#c0d8d8"/><rect x="458.0" y="572.8" width="6.0" height="6.5" fill="#c0d8d8"/><rect x="469.4" y="572.8" width="6.0" height="6.5" fill="#c0d8d8"/><rect x="480.6" y="572.8" width="6.0" height="6.5" fill="#c0d8d8"/><rect x="491.8" y="572.8" width="6.0" height="6.5" fill="#c0d8d8"/><rect x="458.0" y="584.4" width="6.0" height="6.5" fill="#c0d8d8"/><rect x="469.4" y="584.4" width="6.0" height="6.5" fill="#c0d8d8"/><rect x="480.6" y="584.4" width="6.0" height="6.5" fill="#c0d8d8"/><rect x="491.8" y="584.4" width="6.0" height="6.5" fill="#c0d8d8"/><rect x="406.0" y="355.0" width="44.0" height="238.0" fill="#607a8a"/><rect x="412.0" y="365.0" width="16.0" height="7.0" fill="#e8b050"/><rect x="412.0" y="383.5" width="16.0" height="7.0" fill="#e8b050"/><rect x="412.0" y="402.0" width="16.0" height="7.0" fill="#e8b050"/><rect x="412.0" y="420.5" width="16.0" height="7.0" fill="#e8b050"/><rect x="412.0" y="365.0" width="6.0" height="13.0" fill="#e8b050"/><rect x="412.0" y="383.5" width="6.0" height="13.0" fill="#e8b050"/><rect x="412.0" y="402.0" width="6.0" height="13.0" fill="#e8b050"/><rect x="412.0" y="420.5" width="6.0" height="13.0" fill="#e8b050"/><rect x="436.0" y="366.0" width="7.0" height="9.0" fill="#e8b050"/><rect x="436.0" y="384.5" width="7.0" height="9.0" fill="#e8b050"/><rect x="436.0" y="403.0" width="7.0" height="9.0" fill="#e8b050"/><rect x="436.0" y="421.5" width="7.0" height="9.0" fill="#e8b050"/><rect x="401.0" y="424.8" width="55.0" height="168.2" fill="#353535"/><rect x="410.0" y="435.0" width="13.6" height="13.0" fill="#f8dca8"/><rect x="432.8" y="435.0" width="13.6" height="13.0" fill="#f8dca8"/><rect x="410.0" y="459.4" width="13.6" height="13.0" fill="#f8dca8"/><rect x="432.8" y="459.4" width="13.6" height="13.0" fill="#f8dca8"/><rect x="410.0" y="483.8" width="13.6" height="13.0" fill="#f8dca8"/><rect x="432.8" y="483.8" width="13.6" height="13.0" fill="#f8dca8"/><rect x="410.0" y="508.2" width="13.6" height="13.0" fill="#f8dca8"/><rect x="432.8" y="508.2" width="13.6" height="13.0" fill="#f8dca8"/><rect x="410.0" y="532.6" width="13.6" height="13.0" fill="#f8dca8"/><rect x="432.8" y="532.6" width="13.6" height="13.0" fill="#f8dca8"/><rect x="410.0" y="557.0" width="13.6" height="13.0" fill="#f8dca8"/><rect x="432.8" y="557.0" width="13.6" height="13.0" fill="#f8dca8"/><rect x="505.0" y="375.5" width="49.0" height="217.5" fill="#e08a38"/><rect x="509.0" y="399.0" width="37.8" height="5.0" fill="#ffd060"/><rect x="509.0" y="410.0" width="37.8" height="5.0" fill="#ffd060"/><rect x="509.0" y="421.0" width="37.8" height="5.0" fill="#ffd060"/><rect x="509.0" y="432.0" width="37.8" height="5.0" fill="#ffd060"/><rect x="509.0" y="443.0" width="37.8" height="5.0" fill="#ffd060"/><rect x="509.0" y="454.0" width="37.8" height="5.0" fill="#ffd060"/><rect x="509.0" y="465.0" width="37.8" height="5.0" fill="#ffd060"/><rect x="509.0" y="476.0" width="37.8" height="5.0" fill="#ffd060"/><rect x="509.0" y="487.0" width="37.8" height="5.0" fill="#ffd060"/><rect x="509.0" y="498.0" width="37.8" height="5.0" fill="#ffd060"/><rect x="509.0" y="509.0" width="37.8" height="5.0" fill="#ffd060"/><rect x="509.0" y="520.0" width="37.8" height="5.0" fill="#ffd060"/><rect x="509.0" y="531.0" width="37.8" height="5.0" fill="#ffd060"/><rect x="509.0" y="542.0" width="37.8" height="5.0" fill="#ffd060"/><rect x="509.0" y="553.0" width="37.8" height="5.0" fill="#ffd060"/><rect x="564.4" y="311.0" width="21.0" height="20.0" fill="#41616a"/><rect x="557.8" y="330.0" width="33.0" height="31.0" fill="#41616a"/><rect x="551.0" y="360.0" width="48.0" height="233.0" fill="#41616a"/><rect x="556.0" y="372.0" width="1.6" height="213.0" fill="#8ab0b8"/><rect x="560.9" y="372.0" width="1.6" height="213.0" fill="#8ab0b8"/><rect x="565.8" y="372.0" width="1.6" height="213.0" fill="#8ab0b8"/><rect x="570.7" y="372.0" width="1.6" height="213.0" fill="#8ab0b8"/><rect x="575.6" y="372.0" width="1.6" height="213.0" fill="#8ab0b8"/><rect x="580.5" y="372.0" width="1.6" height="213.0" fill="#8ab0b8"/><rect x="585.4" y="372.0" width="1.6" height="213.0" fill="#8ab0b8"/><rect x="590.3" y="372.0" width="1.6" height="213.0" fill="#8ab0b8"/><rect x="595.2" y="372.0" width="1.6" height="213.0" fill="#8ab0b8"/><polygon points="612.0,320.0 669.0,263.0 669.0,593.0 612.0,593.0" fill="#e8b050"/><rect x="623.0" y="335.0" width="7.0" height="7.5" fill="#f3dcb0"/><rect x="634.5" y="335.0" width="7.0" height="7.5" fill="#f3dcb0"/><rect x="645.7" y="335.0" width="7.0" height="7.5" fill="#f3dcb0"/><rect x="656.8" y="335.0" width="7.0" height="7.5" fill="#f3dcb0"/><rect x="623.0" y="346.8" width="7.0" height="7.5" fill="#f3dcb0"/><rect x="634.5" y="346.8" width="7.0" height="7.5" fill="#f3dcb0"/><rect x="645.7" y="346.8" width="7.0" height="7.5" fill="#f3dcb0"/><rect x="656.8" y="346.8" width="7.0" height="7.5" fill="#f3dcb0"/><rect x="623.0" y="358.6" width="7.0" height="7.5" fill="#f3dcb0"/><rect x="634.5" y="358.6" width="7.0" height="7.5" fill="#f3dcb0"/><rect x="645.7" y="358.6" width="7.0" height="7.5" fill="#f3dcb0"/><rect x="656.8" y="358.6" width="7.0" height="7.5" fill="#f3dcb0"/><rect x="623.0" y="370.4" width="7.0" height="7.5" fill="#f3dcb0"/><rect x="634.5" y="370.4" width="7.0" height="7.5" fill="#f3dcb0"/><rect x="645.7" y="370.4" width="7.0" height="7.5" fill="#f3dcb0"/><rect x="656.8" y="370.4" width="7.0" height="7.5" fill="#f3dcb0"/><rect x="623.0" y="382.2" width="7.0" height="7.5" fill="#f3dcb0"/><rect x="634.5" y="382.2" width="7.0" height="7.5" fill="#f3dcb0"/><rect x="645.7" y="382.2" width="7.0" height="7.5" fill="#f3dcb0"/><rect x="656.8" y="382.2" width="7.0" height="7.5" fill="#f3dcb0"/><rect x="623.0" y="394.0" width="7.0" height="7.5" fill="#f3dcb0"/><rect x="634.5" y="394.0" width="7.0" height="7.5" fill="#f3dcb0"/><rect x="645.7" y="394.0" width="7.0" height="7.5" fill="#f3dcb0"/><rect x="656.8" y="394.0" width="7.0" height="7.5" fill="#f3dcb0"/><rect x="623.0" y="405.8" width="7.0" height="7.5" fill="#f3dcb0"/><rect x="634.5" y="405.8" width="7.0" height="7.5" fill="#f3dcb0"/><rect x="645.7" y="405.8" width="7.0" height="7.5" fill="#f3dcb0"/><rect x="656.8" y="405.8" width="7.0" height="7.5" fill="#f3dcb0"/><rect x="623.0" y="417.6" width="7.0" height="7.5" fill="#f3dcb0"/><rect x="634.5" y="417.6" width="7.0" height="7.5" fill="#f3dcb0"/><rect x="645.7" y="417.6" width="7.0" height="7.5" fill="#f3dcb0"/><rect x="656.8" y="417.6" width="7.0" height="7.5" fill="#f3dcb0"/><rect x="623.0" y="429.4" width="7.0" height="7.5" fill="#f3dcb0"/><rect x="634.5" y="429.4" width="7.0" height="7.5" fill="#f3dcb0"/><rect x="645.7" y="429.4" width="7.0" height="7.5" fill="#f3dcb0"/><rect x="656.8" y="429.4" width="7.0" height="7.5" fill="#f3dcb0"/><rect x="623.0" y="441.2" width="7.0" height="7.5" fill="#f3dcb0"/><rect x="634.5" y="441.2" width="7.0" height="7.5" fill="#f3dcb0"/><rect x="645.7" y="441.2" width="7.0" height="7.5" fill="#f3dcb0"/><rect x="656.8" y="441.2" width="7.0" height="7.5" fill="#f3dcb0"/><rect x="623.0" y="453.0" width="7.0" height="7.5" fill="#f3dcb0"/><rect x="634.5" y="453.0" width="7.0" height="7.5" fill="#f3dcb0"/><rect x="645.7" y="453.0" width="7.0" height="7.5" fill="#f3dcb0"/><rect x="656.8" y="453.0" width="7.0" height="7.5" fill="#f3dcb0"/><rect x="623.0" y="464.8" width="7.0" height="7.5" fill="#f3dcb0"/><rect x="634.5" y="464.8" width="7.0" height="7.5" fill="#f3dcb0"/><rect x="645.7" y="464.8" width="7.0" height="7.5" fill="#f3dcb0"/><rect x="656.8" y="464.8" width="7.0" height="7.5" fill="#f3dcb0"/><rect x="601.8" y="424.8" width="84.5" height="168.2" fill="#353535"/><rect x="607.0" y="433.0" width="75.0" height="3.6" fill="#a8a8a8"/><rect x="607.0" y="442.2" width="75.0" height="3.6" fill="#a8a8a8"/><rect x="607.0" y="451.4" width="75.0" height="3.6" fill="#a8a8a8"/><rect x="607.0" y="460.6" width="75.0" height="3.6" fill="#a8a8a8"/><rect x="607.0" y="469.8" width="75.0" height="3.6" fill="#a8a8a8"/><rect x="607.0" y="479.0" width="75.0" height="3.6" fill="#a8a8a8"/><rect x="607.0" y="488.2" width="75.0" height="3.6" fill="#a8a8a8"/><rect x="607.0" y="497.4" width="75.0" height="3.6" fill="#a8a8a8"/><rect x="607.0" y="506.6" width="75.0" height="3.6" fill="#a8a8a8"/><rect x="607.0" y="515.8" width="75.0" height="3.6" fill="#a8a8a8"/><rect x="607.0" y="525.0" width="75.0" height="3.6" fill="#a8a8a8"/><rect x="607.0" y="534.2" width="75.0" height="3.6" fill="#a8a8a8"/><rect x="607.0" y="543.4" width="75.0" height="3.6" fill="#a8a8a8"/><rect x="607.0" y="552.6" width="75.0" height="3.6" fill="#a8a8a8"/><rect x="607.0" y="561.8" width="75.0" height="3.6" fill="#a8a8a8"/><rect x="750.0" y="377.3" width="55.0" height="215.7" fill="#8a5a10"/><rect x="753.0" y="385.0" width="1.3" height="196.0" fill="#a87a2a"/><rect x="756.4" y="385.0" width="1.3" height="196.0" fill="#a87a2a"/><rect x="759.8" y="385.0" width="1.3" height="196.0" fill="#a87a2a"/><rect x="763.2" y="385.0" width="1.3" height="196.0" fill="#a87a2a"/><rect x="766.6" y="385.0" width="1.3" height="196.0" fill="#a87a2a"/><rect x="770.0" y="385.0" width="1.3" height="196.0" fill="#a87a2a"/><rect x="773.4" y="385.0" width="1.3" height="196.0" fill="#a87a2a"/><rect x="776.8" y="385.0" width="1.3" height="196.0" fill="#a87a2a"/><rect x="780.2" y="385.0" width="1.3" height="196.0" fill="#a87a2a"/><rect x="783.6" y="385.0" width="1.3" height="196.0" fill="#a87a2a"/><rect x="787.0" y="385.0" width="1.3" height="196.0" fill="#a87a2a"/><rect x="790.4" y="385.0" width="1.3" height="196.0" fill="#a87a2a"/><rect x="793.8" y="385.0" width="1.3" height="196.0" fill="#a87a2a"/><rect x="797.2" y="385.0" width="1.3" height="196.0" fill="#a87a2a"/><rect x="800.6" y="385.0" width="1.3" height="196.0" fill="#a87a2a"/><rect x="816.7" y="310.4" width="21.3" height="20.0" fill="#a5a5a5"/><rect x="807.5" y="329.8" width="30.5" height="30.0" fill="#a5a5a5"/><rect x="796.3" y="359.3" width="54.0" height="233.7" fill="#a5a5a5"/><rect x="822.0" y="285.0" width="2.0" height="26.0" fill="#c0a0a0"/><rect x="804.4" y="370.5" width="5.0" height="5.0" fill="#e8e8e8"/><rect x="815.6" y="370.5" width="5.0" height="5.0" fill="#e8e8e8"/><rect x="826.8" y="370.5" width="5.0" height="5.0" fill="#e8e8e8"/><rect x="838.0" y="370.5" width="5.0" height="5.0" fill="#e8e8e8"/><rect x="804.4" y="381.1" width="5.0" height="5.0" fill="#e8e8e8"/><rect x="815.6" y="381.1" width="5.0" height="5.0" fill="#e8e8e8"/><rect x="826.8" y="381.1" width="5.0" height="5.0" fill="#e8e8e8"/><rect x="838.0" y="381.1" width="5.0" height="5.0" fill="#e8e8e8"/><rect x="804.4" y="391.7" width="5.0" height="5.0" fill="#e8e8e8"/><rect x="815.6" y="391.7" width="5.0" height="5.0" fill="#e8e8e8"/><rect x="826.8" y="391.7" width="5.0" height="5.0" fill="#e8e8e8"/><rect x="838.0" y="391.7" width="5.0" height="5.0" fill="#e8e8e8"/><rect x="804.4" y="402.3" width="5.0" height="5.0" fill="#e8e8e8"/><rect x="815.6" y="402.3" width="5.0" height="5.0" fill="#e8e8e8"/><rect x="826.8" y="402.3" width="5.0" height="5.0" fill="#e8e8e8"/><rect x="838.0" y="402.3" width="5.0" height="5.0" fill="#e8e8e8"/><rect x="804.4" y="412.9" width="5.0" height="5.0" fill="#e8e8e8"/><rect x="815.6" y="412.9" width="5.0" height="5.0" fill="#e8e8e8"/><rect x="826.8" y="412.9" width="5.0" height="5.0" fill="#e8e8e8"/><rect x="838.0" y="412.9" width="5.0" height="5.0" fill="#e8e8e8"/><rect x="804.4" y="423.5" width="5.0" height="5.0" fill="#e8e8e8"/><rect x="815.6" y="423.5" width="5.0" height="5.0" fill="#e8e8e8"/><rect x="826.8" y="423.5" width="5.0" height="5.0" fill="#e8e8e8"/><rect x="838.0" y="423.5" width="5.0" height="5.0" fill="#e8e8e8"/><rect x="804.4" y="434.1" width="5.0" height="5.0" fill="#e8e8e8"/><rect x="815.6" y="434.1" width="5.0" height="5.0" fill="#e8e8e8"/><rect x="826.8" y="434.1" width="5.0" height="5.0" fill="#e8e8e8"/><rect x="838.0" y="434.1" width="5.0" height="5.0" fill="#e8e8e8"/><rect x="804.4" y="444.7" width="5.0" height="5.0" fill="#e8e8e8"/><rect x="815.6" y="444.7" width="5.0" height="5.0" fill="#e8e8e8"/><rect x="826.8" y="444.7" width="5.0" height="5.0" fill="#e8e8e8"/><rect x="838.0" y="444.7" width="5.0" height="5.0" fill="#e8e8e8"/><rect x="804.4" y="455.3" width="5.0" height="5.0" fill="#e8e8e8"/><rect x="815.6" y="455.3" width="5.0" height="5.0" fill="#e8e8e8"/><rect x="826.8" y="455.3" width="5.0" height="5.0" fill="#e8e8e8"/><rect x="838.0" y="455.3" width="5.0" height="5.0" fill="#e8e8e8"/><rect x="804.4" y="465.9" width="5.0" height="5.0" fill="#e8e8e8"/><rect x="815.6" y="465.9" width="5.0" height="5.0" fill="#e8e8e8"/><rect x="826.8" y="465.9" width="5.0" height="5.0" fill="#e8e8e8"/><rect x="838.0" y="465.9" width="5.0" height="5.0" fill="#e8e8e8"/><rect x="804.4" y="476.5" width="5.0" height="5.0" fill="#e8e8e8"/><rect x="815.6" y="476.5" width="5.0" height="5.0" fill="#e8e8e8"/><rect x="826.8" y="476.5" width="5.0" height="5.0" fill="#e8e8e8"/><rect x="838.0" y="476.5" width="5.0" height="5.0" fill="#e8e8e8"/><rect x="804.4" y="487.1" width="5.0" height="5.0" fill="#e8e8e8"/><rect x="815.6" y="487.1" width="5.0" height="5.0" fill="#e8e8e8"/><rect x="826.8" y="487.1" width="5.0" height="5.0" fill="#e8e8e8"/><rect x="838.0" y="487.1" width="5.0" height="5.0" fill="#e8e8e8"/><rect x="804.4" y="497.7" width="5.0" height="5.0" fill="#e8e8e8"/><rect x="815.6" y="497.7" width="5.0" height="5.0" fill="#e8e8e8"/><rect x="826.8" y="497.7" width="5.0" height="5.0" fill="#e8e8e8"/><rect x="838.0" y="497.7" width="5.0" height="5.0" fill="#e8e8e8"/><rect x="804.4" y="508.3" width="5.0" height="5.0" fill="#e8e8e8"/><rect x="815.6" y="508.3" width="5.0" height="5.0" fill="#e8e8e8"/><rect x="826.8" y="508.3" width="5.0" height="5.0" fill="#e8e8e8"/><rect x="838.0" y="508.3" width="5.0" height="5.0" fill="#e8e8e8"/><rect x="804.4" y="518.9" width="5.0" height="5.0" fill="#e8e8e8"/><rect x="815.6" y="518.9" width="5.0" height="5.0" fill="#e8e8e8"/><rect x="826.8" y="518.9" width="5.0" height="5.0" fill="#e8e8e8"/><rect x="838.0" y="518.9" width="5.0" height="5.0" fill="#e8e8e8"/><rect x="804.4" y="529.5" width="5.0" height="5.0" fill="#e8e8e8"/><rect x="815.6" y="529.5" width="5.0" height="5.0" fill="#e8e8e8"/><rect x="826.8" y="529.5" width="5.0" height="5.0" fill="#e8e8e8"/><rect x="838.0" y="529.5" width="5.0" height="5.0" fill="#e8e8e8"/><rect x="804.4" y="540.1" width="5.0" height="5.0" fill="#e8e8e8"/><rect x="815.6" y="540.1" width="5.0" height="5.0" fill="#e8e8e8"/><rect x="826.8" y="540.1" width="5.0" height="5.0" fill="#e8e8e8"/><rect x="838.0" y="540.1" width="5.0" height="5.0" fill="#e8e8e8"/><rect x="804.4" y="550.7" width="5.0" height="5.0" fill="#e8e8e8"/><rect x="815.6" y="550.7" width="5.0" height="5.0" fill="#e8e8e8"/><rect x="826.8" y="550.7" width="5.0" height="5.0" fill="#e8e8e8"/><rect x="838.0" y="550.7" width="5.0" height="5.0" fill="#e8e8e8"/><rect x="804.4" y="561.3" width="5.0" height="5.0" fill="#e8e8e8"/><rect x="815.6" y="561.3" width="5.0" height="5.0" fill="#e8e8e8"/><rect x="826.8" y="561.3" width="5.0" height="5.0" fill="#e8e8e8"/><rect x="838.0" y="561.3" width="5.0" height="5.0" fill="#e8e8e8"/><rect x="804.4" y="571.9" width="5.0" height="5.0" fill="#e8e8e8"/><rect x="815.6" y="571.9" width="5.0" height="5.0" fill="#e8e8e8"/><rect x="826.8" y="571.9" width="5.0" height="5.0" fill="#e8e8e8"/><rect x="838.0" y="571.9" width="5.0" height="5.0" fill="#e8e8e8"/><rect x="804.4" y="582.5" width="5.0" height="5.0" fill="#e8e8e8"/><rect x="815.6" y="582.5" width="5.0" height="5.0" fill="#e8e8e8"/><rect x="826.8" y="582.5" width="5.0" height="5.0" fill="#e8e8e8"/><rect x="838.0" y="582.5" width="5.0" height="5.0" fill="#e8e8e8"/><rect x="889.0" y="330.8" width="4.0" height="45.0" fill="#3a3a3a"/><rect x="877.8" y="370.5" width="15.2" height="20.0" fill="#3a3a3a"/><rect x="859.4" y="385.8" width="33.6" height="25.0" fill="#3a3a3a"/><rect x="838.0" y="409.0" width="54.0" height="184.0" fill="#3a3a3a"/><rect x="846.0" y="417.4" width="6.0" height="5.0" fill="#e8e8e8"/><rect x="857.0" y="417.4" width="6.0" height="5.0" fill="#e8e8e8"/><rect x="868.0" y="417.4" width="6.0" height="5.0" fill="#e8e8e8"/><rect x="879.0" y="417.4" width="6.0" height="5.0" fill="#e8e8e8"/><rect x="846.0" y="426.2" width="6.0" height="5.0" fill="#e8e8e8"/><rect x="857.0" y="426.2" width="6.0" height="5.0" fill="#e8e8e8"/><rect x="868.0" y="426.2" width="6.0" height="5.0" fill="#e8e8e8"/><rect x="879.0" y="426.2" width="6.0" height="5.0" fill="#e8e8e8"/><rect x="846.0" y="435.0" width="6.0" height="5.0" fill="#e8e8e8"/><rect x="857.0" y="435.0" width="6.0" height="5.0" fill="#e8e8e8"/><rect x="868.0" y="435.0" width="6.0" height="5.0" fill="#e8e8e8"/><rect x="879.0" y="435.0" width="6.0" height="5.0" fill="#e8e8e8"/><rect x="846.0" y="443.8" width="6.0" height="5.0" fill="#e8e8e8"/><rect x="857.0" y="443.8" width="6.0" height="5.0" fill="#e8e8e8"/><rect x="868.0" y="443.8" width="6.0" height="5.0" fill="#e8e8e8"/><rect x="879.0" y="443.8" width="6.0" height="5.0" fill="#e8e8e8"/><rect x="846.0" y="452.6" width="6.0" height="5.0" fill="#e8e8e8"/><rect x="857.0" y="452.6" width="6.0" height="5.0" fill="#e8e8e8"/><rect x="868.0" y="452.6" width="6.0" height="5.0" fill="#e8e8e8"/><rect x="879.0" y="452.6" width="6.0" height="5.0" fill="#e8e8e8"/><rect x="846.0" y="461.4" width="6.0" height="5.0" fill="#e8e8e8"/><rect x="857.0" y="461.4" width="6.0" height="5.0" fill="#e8e8e8"/><rect x="868.0" y="461.4" width="6.0" height="5.0" fill="#e8e8e8"/><rect x="879.0" y="461.4" width="6.0" height="5.0" fill="#e8e8e8"/><rect x="846.0" y="470.2" width="6.0" height="5.0" fill="#e8e8e8"/><rect x="857.0" y="470.2" width="6.0" height="5.0" fill="#e8e8e8"/><rect x="868.0" y="470.2" width="6.0" height="5.0" fill="#e8e8e8"/><rect x="879.0" y="470.2" width="6.0" height="5.0" fill="#e8e8e8"/><rect x="846.0" y="479.0" width="6.0" height="5.0" fill="#e8e8e8"/><rect x="857.0" y="479.0" width="6.0" height="5.0" fill="#e8e8e8"/><rect x="868.0" y="479.0" width="6.0" height="5.0" fill="#e8e8e8"/><rect x="879.0" y="479.0" width="6.0" height="5.0" fill="#e8e8e8"/><rect x="846.0" y="487.8" width="6.0" height="5.0" fill="#e8e8e8"/><rect x="857.0" y="487.8" width="6.0" height="5.0" fill="#e8e8e8"/><rect x="868.0" y="487.8" width="6.0" height="5.0" fill="#e8e8e8"/><rect x="879.0" y="487.8" width="6.0" height="5.0" fill="#e8e8e8"/><rect x="846.0" y="496.6" width="6.0" height="5.0" fill="#e8e8e8"/><rect x="857.0" y="496.6" width="6.0" height="5.0" fill="#e8e8e8"/><rect x="868.0" y="496.6" width="6.0" height="5.0" fill="#e8e8e8"/><rect x="879.0" y="496.6" width="6.0" height="5.0" fill="#e8e8e8"/><rect x="846.0" y="505.4" width="6.0" height="5.0" fill="#e8e8e8"/><rect x="857.0" y="505.4" width="6.0" height="5.0" fill="#e8e8e8"/><rect x="868.0" y="505.4" width="6.0" height="5.0" fill="#e8e8e8"/><rect x="879.0" y="505.4" width="6.0" height="5.0" fill="#e8e8e8"/><rect x="846.0" y="514.2" width="6.0" height="5.0" fill="#e8e8e8"/><rect x="857.0" y="514.2" width="6.0" height="5.0" fill="#e8e8e8"/><rect x="868.0" y="514.2" width="6.0" height="5.0" fill="#e8e8e8"/><rect x="879.0" y="514.2" width="6.0" height="5.0" fill="#e8e8e8"/><rect x="846.0" y="523.0" width="6.0" height="5.0" fill="#e8e8e8"/><rect x="857.0" y="523.0" width="6.0" height="5.0" fill="#e8e8e8"/><rect x="868.0" y="523.0" width="6.0" height="5.0" fill="#e8e8e8"/><rect x="879.0" y="523.0" width="6.0" height="5.0" fill="#e8e8e8"/><rect x="846.0" y="531.8" width="6.0" height="5.0" fill="#e8e8e8"/><rect x="857.0" y="531.8" width="6.0" height="5.0" fill="#e8e8e8"/><rect x="868.0" y="531.8" width="6.0" height="5.0" fill="#e8e8e8"/><rect x="879.0" y="531.8" width="6.0" height="5.0" fill="#e8e8e8"/><rect x="846.0" y="540.6" width="6.0" height="5.0" fill="#e8e8e8"/><rect x="857.0" y="540.6" width="6.0" height="5.0" fill="#e8e8e8"/><rect x="868.0" y="540.6" width="6.0" height="5.0" fill="#e8e8e8"/><rect x="879.0" y="540.6" width="6.0" height="5.0" fill="#e8e8e8"/><rect x="846.0" y="549.4" width="6.0" height="5.0" fill="#e8e8e8"/><rect x="857.0" y="549.4" width="6.0" height="5.0" fill="#e8e8e8"/><rect x="868.0" y="549.4" width="6.0" height="5.0" fill="#e8e8e8"/><rect x="879.0" y="549.4" width="6.0" height="5.0" fill="#e8e8e8"/><rect x="846.0" y="558.2" width="6.0" height="5.0" fill="#e8e8e8"/><rect x="857.0" y="558.2" width="6.0" height="5.0" fill="#e8e8e8"/><rect x="868.0" y="558.2" width="6.0" height="5.0" fill="#e8e8e8"/><rect x="879.0" y="558.2" width="6.0" height="5.0" fill="#e8e8e8"/><rect x="846.0" y="567.0" width="6.0" height="5.0" fill="#e8e8e8"/><rect x="857.0" y="567.0" width="6.0" height="5.0" fill="#e8e8e8"/><rect x="868.0" y="567.0" width="6.0" height="5.0" fill="#e8e8e8"/><rect x="879.0" y="567.0" width="6.0" height="5.0" fill="#e8e8e8"/><rect x="846.0" y="575.8" width="6.0" height="5.0" fill="#e8e8e8"/><rect x="857.0" y="575.8" width="6.0" height="5.0" fill="#e8e8e8"/><rect x="868.0" y="575.8" width="6.0" height="5.0" fill="#e8e8e8"/><rect x="879.0" y="575.8" width="6.0" height="5.0" fill="#e8e8e8"/><rect x="892.0" y="390.0" width="16.3" height="40.0" fill="#8b3d10"/><rect x="908.0" y="403.0" width="17.6" height="30.0" fill="#8b3d10"/><rect x="892.0" y="424.5" width="56.0" height="168.5" fill="#8b3d10"/><rect x="902.0" y="435.7" width="12.4" height="12.4" fill="#a8a8a8"/><rect x="925.0" y="435.7" width="12.4" height="12.4" fill="#a8a8a8"/><rect x="902.0" y="460.5" width="12.4" height="12.4" fill="#a8a8a8"/><rect x="925.0" y="460.5" width="12.4" height="12.4" fill="#a8a8a8"/><rect x="902.0" y="485.3" width="12.4" height="12.4" fill="#a8a8a8"/><rect x="925.0" y="485.3" width="12.4" height="12.4" fill="#a8a8a8"/><rect x="902.0" y="510.1" width="12.4" height="12.4" fill="#a8a8a8"/><rect x="925.0" y="510.1" width="12.4" height="12.4" fill="#a8a8a8"/><rect x="902.0" y="534.9" width="12.4" height="12.4" fill="#a8a8a8"/><rect x="925.0" y="534.9" width="12.4" height="12.4" fill="#a8a8a8"/><rect x="902.0" y="559.7" width="12.4" height="12.4" fill="#a8a8a8"/><rect x="925.0" y="559.7" width="12.4" height="12.4" fill="#a8a8a8"/><rect x="948.0" y="424.5" width="50.0" height="168.5" fill="#e09040"/><rect x="951.0" y="432.7" width="44.4" height="4.0" fill="#ffd890"/><rect x="951.0" y="441.6" width="44.4" height="4.0" fill="#ffd890"/><rect x="951.0" y="450.5" width="44.4" height="4.0" fill="#ffd890"/><rect x="951.0" y="459.4" width="44.4" height="4.0" fill="#ffd890"/><rect x="951.0" y="468.3" width="44.4" height="4.0" fill="#ffd890"/><rect x="951.0" y="477.2" width="44.4" height="4.0" fill="#ffd890"/><rect x="951.0" y="486.1" width="44.4" height="4.0" fill="#ffd890"/><rect x="951.0" y="495.0" width="44.4" height="4.0" fill="#ffd890"/><rect x="951.0" y="503.9" width="44.4" height="4.0" fill="#ffd890"/><rect x="951.0" y="512.8" width="44.4" height="4.0" fill="#ffd890"/><rect x="951.0" y="521.7" width="44.4" height="4.0" fill="#ffd890"/><rect x="951.0" y="530.6" width="44.4" height="4.0" fill="#ffd890"/><rect x="951.0" y="539.5" width="44.4" height="4.0" fill="#ffd890"/><rect x="951.0" y="548.4" width="44.4" height="4.0" fill="#ffd890"/><rect x="951.0" y="557.3" width="44.4" height="4.0" fill="#ffd890"/><rect x="951.0" y="566.2" width="44.4" height="4.0" fill="#ffd890"/>
<defs><linearGradient id="rg" x1="0" y1="0" x2="0" y2="1"><stop offset="0" stop-color="#e4e6e6"/><stop offset="0.45" stop-color="#b4b4b4"/><stop offset="0.8" stop-color="#7a7a7a"/><stop offset="1" stop-color="#4a4a4a"/></linearGradient></defs><rect x="619" y="593" width="411" height="94" fill="url(#rg)" stroke="#d0dde2" stroke-width="2"/>
<path d="M782,430 Q786,446 800,452 Q820,458 833,463" fill="none" stroke="#222" stroke-width="1.5"/><ellipse cx="758" cy="395.5" rx="30.5" ry="37.5" transform="rotate(-30 758 395.5)" fill="#0cb0f2"/><path d="M822,574 Q812,592 799,590 Q788,588 778,580 Q768,576 762,588" fill="none" stroke="#0c0f0a" stroke-width="10" stroke-linecap="round"/><path d="M862,585 Q872,600 870,636" fill="none" stroke="#0c0f0a" stroke-width="10" stroke-linecap="round"/><ellipse cx="874" cy="636" rx="12" ry="7" fill="#0c0f0a"/><path d="M834,503 C838,490 852,480 866,480 C880,481 896,484 905,490 C914,496 917,502 914,512 C910,528 902,545 896,552 C892,570 880,586 858,589 C838,590 824,584 820,570 C817,558 817,545 820,535 C824,520 830,510 834,503 Z" fill="#90e07a"/><path d="M887,485 Q886,470 890,460" fill="none" stroke="#6a4a22" stroke-width="3"/><ellipse cx="875" cy="471" rx="12" ry="6" transform="rotate(8 875 471)" fill="#50b040"/><path d="M829,516 Q812,538 820,558 Q828,568 848,570" fill="none" stroke="#0c0f0a" stroke-width="9" stroke-linecap="round"/><path d="M903,542 Q912,566 926,565 Q942,562 952,551" fill="none" stroke="#0c0f0a" stroke-width="9" stroke-linecap="round"/><path d="M880,506 q4,4 8,0 M899,509 q4,4 8,0" fill="none" stroke="#0c0f0a" stroke-width="1.8"/><path d="M892,512 L888,530 L895,528 Z" fill="#0c0f0a"/><path d="M882,526 Q890,540 902,532" fill="none" stroke="#0c0f0a" stroke-width="2.2"/><ellipse cx="845" cy="655" rx="50" ry="4" fill="#3a3a3a"/><path d="M824,636 Q828,646 842,646 L882,646 Q895,644 898,635 Q890,640 880,640 L840,640 Q830,640 824,636 Z" fill="#f0a040"/><circle cx="845" cy="650" r="5" fill="#f0a040"/><circle cx="845" cy="650" r="1.8" fill="#7a3a10"/><circle cx="878" cy="650" r="5" fill="#f0a040"/><circle cx="878" cy="650" r="1.8" fill="#7a3a10"/>
<path d="M622,311 L1108,311.5" fill="none" stroke="#6aa2ec" stroke-width="4.5" stroke-linecap="round" stroke-dasharray="0 9.2"/><path d="M330,412 C341.7,413.0 377.3,417.2 400,418 C422.7,418.8 447.7,417.9 466,417 C484.3,416.1 497.2,413.8 510,412.5 C522.8,411.2 525.0,412.1 543,409.5 C561.0,406.9 598.7,400.9 618,397 C637.3,393.1 641.3,390.5 659,386 C676.7,381.5 703.2,376.3 724,370 C744.8,363.7 763.8,355.7 784,348 C804.2,340.3 829.5,330.1 845,324 C860.5,317.9 861.7,318.0 877,311.5 C892.3,305.0 920.2,292.4 937,285 C953.8,277.6 958.0,276.3 978,267 C998.0,257.7 1038.7,238.0 1057,229 C1075.3,220.0 1082.8,215.7 1088,213" fill="none" stroke="#3a1858" stroke-width="2.2" opacity="0.55"/><path d="M330,412 C341.7,413.0 377.3,417.2 400,418 C422.7,418.8 447.7,417.9 466,417 C484.3,416.1 497.2,413.8 510,412.5 C522.8,411.2 525.0,412.1 543,409.5 C561.0,406.9 598.7,400.9 618,397 C637.3,393.1 641.3,390.5 659,386 C676.7,381.5 703.2,376.3 724,370 C744.8,363.7 763.8,355.7 784,348 C804.2,340.3 829.5,330.1 845,324 C860.5,317.9 861.7,318.0 877,311.5 C892.3,305.0 920.2,292.4 937,285 C953.8,277.6 958.0,276.3 978,267 C998.0,257.7 1038.7,238.0 1057,229 C1075.3,220.0 1082.8,215.7 1088,213" fill="none" stroke="#9a4ee6" stroke-width="5.2" stroke-linecap="round" stroke-dasharray="0 10"/><path d="M371,468 C374.2,468.7 381.8,469.4 390,472 C398.2,474.6 406.9,479.4 420.5,483.5 C434.1,487.6 456.6,492.6 471.5,496.5 C486.4,500.4 495.4,503.2 510,507 C524.6,510.8 543.3,516.2 559,519.5 C574.7,522.8 583.0,523.0 604,526.5 C625.0,530.0 660.2,536.6 685,540.5 C709.8,544.4 731.2,547.4 753,550 C774.8,552.6 793.2,554.2 815.6,556 C838.0,557.8 863.6,559.5 887.5,560.7 C911.4,561.9 931.1,562.5 959,563 C986.9,563.5 1021.7,564.5 1055,564 C1088.3,563.5 1141.7,560.7 1159,560" fill="none" stroke="#4a1048" stroke-width="2.4" opacity="0.6"/><path d="M371,468 C374.2,468.7 381.8,469.4 390,472 C398.2,474.6 406.9,479.4 420.5,483.5 C434.1,487.6 456.6,492.6 471.5,496.5 C486.4,500.4 495.4,503.2 510,507 C524.6,510.8 543.3,516.2 559,519.5 C574.7,522.8 583.0,523.0 604,526.5 C625.0,530.0 660.2,536.6 685,540.5 C709.8,544.4 731.2,547.4 753,550 C774.8,552.6 793.2,554.2 815.6,556 C838.0,557.8 863.6,559.5 887.5,560.7 C911.4,561.9 931.1,562.5 959,563 C986.9,563.5 1021.7,564.5 1055,564 C1088.3,563.5 1141.7,560.7 1159,560" fill="none" stroke="#e070e8" stroke-width="5.2" stroke-linecap="round" stroke-dasharray="0 10"/><polygon points="371,463 376,468 371,473 366,468" fill="#e07ae6"/><polygon points="1159,555 1164,560 1159,565 1154,560" fill="#e07ae6"/>
</svg>
<div class="a" style="left:141px;top:727px;width:1658px;height:349px;background:#535353;"></div><div class="a" style="left:141px;top:727px;width:1658px;height:2px;background:#262626;"></div><div class="a" style="left:266px;top:729px;width:1533px;height:36px;background:#363636;"></div><div class="a" style="left:141px;top:765px;width:1658px;height:1px;background:#5e5e5e;"></div><div class="t" style="left:156px;top:735.4px;font-size:24px;line-height:24px;color:#f2f2f2;font-weight:bold;">Timeline</div><svg class="a" style="left:1756px;top:736px" width="36" height="22"><polygon points="3,8 11,8 7,13" fill="#e8e8e8"/><rect x="15" y="3" width="18" height="2" fill="#e8e8e8"/><rect x="15" y="8" width="18" height="2" fill="#e8e8e8"/><rect x="15" y="13" width="18" height="2" fill="#e8e8e8"/><rect x="15" y="18" width="18" height="2" fill="#e8e8e8"/></svg><div class="a" style="left:141px;top:766px;width:1658px;height:54px;background:#545454;"></div><svg class="a" style="left:508px;top:811px" width="1291" height="8"><rect x="18.2" y="0" width="2" height="7" fill="#b9b9b9"/><rect x="35.5" y="0" width="2" height="7" fill="#b9b9b9"/><rect x="52.8" y="0" width="2" height="7" fill="#b9b9b9"/><rect x="70.1" y="0" width="2" height="7" fill="#b9b9b9"/><rect x="87.4" y="0" width="2" height="7" fill="#b9b9b9"/><rect x="104.7" y="0" width="2" height="7" fill="#b9b9b9"/><rect x="122.0" y="0" width="2" height="7" fill="#b9b9b9"/><rect x="139.2" y="0" width="2" height="7" fill="#b9b9b9"/><rect x="156.5" y="0" width="2" height="7" fill="#b9b9b9"/><rect x="173.8" y="0" width="2" height="7" fill="#b9b9b9"/><rect x="191.1" y="0" width="2" height="7" fill="#b9b9b9"/><rect x="208.4" y="0" width="2" height="7" fill="#b9b9b9"/><rect x="225.7" y="0" width="2" height="7" fill="#b9b9b9"/><rect x="243.0" y="0" width="2" height="7" fill="#b9b9b9"/><rect x="260.2" y="0" width="2" height="7" fill="#b9b9b9"/><rect x="277.5" y="0" width="2" height="7" fill="#b9b9b9"/><rect x="294.8" y="0" width="2" height="7" fill="#b9b9b9"/><rect x="312.1" y="0" width="2" height="7" fill="#b9b9b9"/><rect x="329.4" y="0" width="2" height="7" fill="#b9b9b9"/><rect x="346.7" y="0" width="2" height="7" fill="#b9b9b9"/><rect x="364.0" y="0" width="2" height="7" fill="#b9b9b9"/><rect x="381.2" y="0" width="2" height="7" fill="#b9b9b9"/><rect x="398.5" y="0" width="2" height="7" fill="#b9b9b9"/><rect x="415.8" y="0" width="2" height="7" fill="#b9b9b9"/><rect x="433.1" y="0" width="2" height="7" fill="#b9b9b9"/><rect x="450.4" y="0" width="2" height="7" fill="#b9b9b9"/><rect x="467.7" y="0" width="2" height="7" fill="#b9b9b9"/><rect x="484.9" y="0" width="2" height="7" fill="#b9b9b9"/><rect x="502.2" y="0" width="2" height="7" fill="#b9b9b9"/><rect x="519.5" y="0" width="2" height="7" fill="#b9b9b9"/><rect x="536.8" y="0" width="2" height="7" fill="#b9b9b9"/><rect x="554.1" y="0" width="2" height="7" fill="#b9b9b9"/><rect x="571.4" y="0" width="2" height="7" fill="#b9b9b9"/><rect x="588.7" y="0" width="2" height="7" fill="#b9b9b9"/><rect x="605.9" y="0" width="2" height="7" fill="#b9b9b9"/><rect x="623.2" y="0" width="2" height="7" fill="#b9b9b9"/><rect x="640.5" y="0" width="2" height="7" fill="#b9b9b9"/><rect x="657.8" y="0" width="2" height="7" fill="#b9b9b9"/><rect x="675.1" y="0" width="2" height="7" fill="#b9b9b9"/><rect x="692.4" y="0" width="2" height="7" fill="#b9b9b9"/><rect x="709.7" y="0" width="2" height="7" fill="#b9b9b9"/><rect x="726.9" y="0" width="2" height="7" fill="#b9b9b9"/><rect x="744.2" y="0" width="2" height="7" fill="#b9b9b9"/><rect x="761.5" y="0" width="2" height="7" fill="#b9b9b9"/><rect x="778.8" y="0" width="2" height="7" fill="#b9b9b9"/><rect x="796.1" y="0" width="2" height="7" fill="#b9b9b9"/><rect x="813.4" y="0" width="2" height="7" fill="#b9b9b9"/><rect x="830.6" y="0" width="2" height="7" fill="#b9b9b9"/><rect x="847.9" y="0" width="2" height="7" fill="#b9b9b9"/><rect x="865.2" y="0" width="2" height="7" fill="#b9b9b9"/><rect x="882.5" y="0" width="2" height="7" fill="#b9b9b9"/><rect x="899.8" y="0" width="2" height="7" fill="#b9b9b9"/><rect x="917.1" y="0" width="2" height="7" fill="#b9b9b9"/><rect x="934.4" y="0" width="2" height="7" fill="#b9b9b9"/><rect x="951.6" y="0" width="2" height="7" fill="#b9b9b9"/><rect x="968.9" y="0" width="2" height="7" fill="#b9b9b9"/><rect x="986.2" y="0" width="2" height="7" fill="#b9b9b9"/><rect x="1003.5" y="0" width="2" height="7" fill="#b9b9b9"/><rect x="1020.8" y="0" width="2" height="7" fill="#b9b9b9"/><rect x="1038.1" y="0" width="2" height="7" fill="#b9b9b9"/><rect x="1055.3" y="0" width="2" height="7" fill="#b9b9b9"/><rect x="1072.6" y="0" width="2" height="7" fill="#b9b9b9"/><rect x="1089.9" y="0" width="2" height="7" fill="#b9b9b9"/><rect x="1107.2" y="0" width="2" height="7" fill="#b9b9b9"/><rect x="1124.5" y="0" width="2" height="7" fill="#b9b9b9"/><rect x="1141.8" y="0" width="2" height="7" fill="#b9b9b9"/><rect x="1159.1" y="0" width="2" height="7" fill="#b9b9b9"/><rect x="1176.3" y="0" width="2" height="7" fill="#b9b9b9"/><rect x="1193.6" y="0" width="2" height="7" fill="#b9b9b9"/><rect x="1210.9" y="0" width="2" height="7" fill="#b9b9b9"/><rect x="1228.2" y="0" width="2" height="7" fill="#b9b9b9"/><rect x="1245.5" y="0" width="2" height="7" fill="#b9b9b9"/><rect x="1262.8" y="0" width="2" height="7" fill="#b9b9b9"/><rect x="1280.1" y="0" width="2" height="7" fill="#b9b9b9"/></svg><div class="a" style="left:509px;top:778px;width:1288px;height:32px;overflow:hidden"><div class="t" style="left:0.8px;top:4px;font-size:26px;line-height:26px;color:#f4f4f4;transform:scaleX(1.08);transform-origin:0 0;-webkit-text-stroke:0.6px #f4f4f4">1</div><div class="t" style="left:69.9px;top:4px;font-size:26px;line-height:26px;color:#f4f4f4;transform:scaleX(1.08);transform-origin:0 0;-webkit-text-stroke:0.6px #f4f4f4">5</div><div class="t" style="left:156.3px;top:4px;font-size:26px;line-height:26px;color:#f4f4f4;transform:scaleX(1.08);transform-origin:0 0;-webkit-text-stroke:0.6px #f4f4f4">10</div><div class="t" style="left:242.8px;top:4px;font-size:26px;line-height:26px;color:#f4f4f4;transform:scaleX(1.08);transform-origin:0 0;-webkit-text-stroke:0.6px #f4f4f4">15</div><div class="t" style="left:329.2px;top:4px;font-size:26px;line-height:26px;color:#f4f4f4;transform:scaleX(1.08);transform-origin:0 0;-webkit-text-stroke:0.6px #f4f4f4">20</div><div class="t" style="left:415.6px;top:4px;font-size:26px;line-height:26px;color:#f4f4f4;transform:scaleX(1.08);transform-origin:0 0;-webkit-text-stroke:0.6px #f4f4f4">25</div><div class="t" style="left:502.0px;top:4px;font-size:26px;line-height:26px;color:#f4f4f4;transform:scaleX(1.08);transform-origin:0 0;-webkit-text-stroke:0.6px #f4f4f4">30</div><div class="t" style="left:588.5px;top:4px;font-size:26px;line-height:26px;color:#f4f4f4;transform:scaleX(1.08);transform-origin:0 0;-webkit-text-stroke:0.6px #f4f4f4">35</div><div class="t" style="left:674.9px;top:4px;font-size:26px;line-height:26px;color:#f4f4f4;transform:scaleX(1.08);transform-origin:0 0;-webkit-text-stroke:0.6px #f4f4f4">40</div><div class="t" style="left:761.3px;top:4px;font-size:26px;line-height:26px;color:#f4f4f4;transform:scaleX(1.08);transform-origin:0 0;-webkit-text-stroke:0.6px #f4f4f4">45</div><div class="t" style="left:847.7px;top:4px;font-size:26px;line-height:26px;color:#f4f4f4;transform:scaleX(1.08);transform-origin:0 0;-webkit-text-stroke:0.6px #f4f4f4">50</div><div class="t" style="left:934.2px;top:4px;font-size:26px;line-height:26px;color:#f4f4f4;transform:scaleX(1.08);transform-origin:0 0;-webkit-text-stroke:0.6px #f4f4f4">55</div><div class="t" style="left:1020.6px;top:4px;font-size:26px;line-height:26px;color:#f4f4f4;transform:scaleX(1.08);transform-origin:0 0;-webkit-text-stroke:0.6px #f4f4f4">60</div><div class="t" style="left:1107.0px;top:4px;font-size:26px;line-height:26px;color:#f4f4f4;transform:scaleX(1.08);transform-origin:0 0;-webkit-text-stroke:0.6px #f4f4f4">65</div><div class="t" style="left:1193.4px;top:4px;font-size:26px;line-height:26px;color:#f4f4f4;transform:scaleX(1.08);transform-origin:0 0;-webkit-text-stroke:0.6px #f4f4f4">70</div><div class="t" style="left:1279.9px;top:4px;font-size:26px;line-height:26px;color:#f4f4f4;transform:scaleX(1.08);transform-origin:0 0;-webkit-text-stroke:0.6px #f4f4f4">75</div></div><svg class="a" style="left:388px;top:782px" width="32" height="24"><path d="M3,12 Q16,-3 29,12 Q16,27 3,12 Z" fill="#e6e6e6" stroke="#2a2a2a" stroke-width="1"/><circle cx="16" cy="12" r="6.5" fill="#333"/><circle cx="18.5" cy="9" r="2" fill="#e6e6e6"/></svg><svg class="a" style="left:435px;top:780px" width="24" height="28"><path d="M5,12 V8 A6,6 0 0 1 17,8 V12" fill="none" stroke="#e4e4e4" stroke-width="3"/><rect x="1" y="12" width="20" height="14" rx="2" fill="#e4e4e4"/><rect x="9.5" y="17" width="3" height="6" fill="#333"/></svg><svg class="a" style="left:476px;top:782px" width="16" height="26"><rect x="3" y="2" width="8.5" height="22" fill="#606060" stroke="#111" stroke-width="3"/></svg><div class="a" style="left:508px;top:820px;width:1px;height:205px;background:#6a6a6a;"></div><div class="a" style="left:141px;top:820px;width:367px;height:38px;background:#c4952e;"></div><div class="a" style="left:141px;top:858px;width:367px;height:1.5px;background:#8a6a2a;"></div><div class="t" style="left:220px;top:828.5px;font-size:24px;line-height:24px;color:#fff4d8;font-weight:bold;">baloon</div><div class="a" style="left:478px;top:829px;width:11px;height:22px;background:#b23ef2;"></div><svg class="a" style="left:348px;top:823px" width="30" height="30"><path d="M4,26 L7,18 L22,3 A3,3 0 0 1 27,8 L12,23 Z" fill="#f6ecd0" stroke="#8a6a20" stroke-width="1"/><path d="M9,16 L14,21" stroke="#7a5a20" stroke-width="2"/></svg><svg class="a" style="left:398px;top:834px" width="56" height="14"><polygon points="7,1 13,7 7,13 1,7" fill="#fff5d0"/><polygon points="48,1 54,7 48,13 42,7" fill="#fff5d0"/></svg><svg class="a" style="left:182px;top:825px" width="32" height="32"><rect x="15" y="3.5" width="13.5" height="1.6" fill="#4a3a10"/><rect x="15" y="5.2" width="13.5" height="12.8" fill="#fbeec8"/><rect x="17" y="7.2" width="9" height="9" fill="#2e2a22"/><path d="M10.5,12.8 H15 V18 H21 V23 H15 V27 H8.5 V31 H2 V23 H6.5 V18 H10.5 Z" fill="#fbeec8" opacity="0.95"/><rect x="10" y="11.5" width="4" height="1.6" fill="#4a3a10"/><rect x="6" y="16.5" width="4" height="1.6" fill="#4a3a10"/><rect x="2" y="21.5" width="4" height="1.6" fill="#4a3a10"/><rect x="8" y="20" width="6" height="2" fill="#bbb" opacity="0.5"/></svg><div class="a" style="left:141px;top:859px;width:367px;height:38px;background:#555555;"></div><div class="a" style="left:141px;top:897px;width:367px;height:1.5px;background:#5f5f5f;"></div><div class="t" style="left:220px;top:867.5px;font-size:24px;line-height:24px;color:#f4f4f4;font-weight:bold;">character</div><div class="a" style="left:478px;top:868px;width:11px;height:22px;background:#ff5cf2;"></div><svg class="a" style="left:399px;top:872px" width="12" height="12"><polygon points="6,1 11,6 6,11 1,6" fill="#000"/></svg><svg class="a" style="left:431px;top:864px" width="24" height="28"><path d="M5,12 V8 A6,6 0 0 1 17,8 V12" fill="none" stroke="#e4e4e4" stroke-width="3"/><rect x="1" y="12" width="20" height="14" rx="2" fill="#e4e4e4"/><rect x="9.5" y="17" width="3" height="6" fill="#333"/></svg><svg class="a" style="left:182px;top:864px" width="32" height="32"><rect x="15" y="3.5" width="13.5" height="1.6" fill="#222"/><rect x="15" y="5.2" width="13.5" height="12.8" fill="#e4e4e4"/><rect x="17" y="7.2" width="9" height="9" fill="#2e2a22"/><path d="M10.5,12.8 H15 V18 H21 V23 H15 V27 H8.5 V31 H2 V23 H6.5 V18 H10.5 Z" fill="#e4e4e4" opacity="0.95"/><rect x="10" y="11.5" width="4" height="1.6" fill="#222"/><rect x="6" y="16.5" width="4" height="1.6" fill="#222"/><rect x="2" y="21.5" width="4" height="1.6" fill="#222"/><rect x="8" y="20" width="6" height="2" fill="#bbb" opacity="0.5"/></svg><div class="a" style="left:141px;top:898px;width:367px;height:38px;background:#555555;"></div><div class="a" style="left:141px;top:936px;width:367px;height:1.5px;background:#5f5f5f;"></div><div class="t" style="left:220px;top:906.5px;font-size:24px;line-height:24px;color:#f4f4f4;font-weight:bold;">citysca...</div><div class="a" style="left:478px;top:907px;width:11px;height:22px;background:#5aa2f2;"></div><svg class="a" style="left:399px;top:911px" width="12" height="12"><polygon points="6,1 11,6 6,11 1,6" fill="#000"/></svg><svg class="a" style="left:431px;top:903px" width="24" height="28"><path d="M5,12 V8 A6,6 0 0 1 17,8 V12" fill="none" stroke="#e4e4e4" stroke-width="3"/><rect x="1" y="12" width="20" height="14" rx="2" fill="#e4e4e4"/><rect x="9.5" y="17" width="3" height="6" fill="#333"/></svg><svg class="a" style="left:182px;top:903px" width="32" height="32"><rect x="15" y="3.5" width="13.5" height="1.6" fill="#222"/><rect x="15" y="5.2" width="13.5" height="12.8" fill="#e4e4e4"/><rect x="17" y="7.2" width="9" height="9" fill="#2e2a22"/><path d="M10.5,12.8 H15 V18 H21 V23 H15 V27 H8.5 V31 H2 V23 H6.5 V18 H10.5 Z" fill="#e4e4e4" opacity="0.95"/><rect x="10" y="11.5" width="4" height="1.6" fill="#222"/><rect x="6" y="16.5" width="4" height="1.6" fill="#222"/><rect x="2" y="21.5" width="4" height="1.6" fill="#222"/><rect x="8" y="20" width="6" height="2" fill="#bbb" opacity="0.5"/></svg><div class="a" style="left:141px;top:937px;width:367px;height:38px;background:#555555;"></div><div class="a" style="left:141px;top:975px;width:367px;height:1.5px;background:#5f5f5f;"></div><div class="t" style="left:220px;top:945.5px;font-size:24px;line-height:24px;color:#f4f4f4;font-weight:bold;">road</div><div class="a" style="left:478px;top:946px;width:11px;height:22px;background:#5aa2f2;"></div><svg class="a" style="left:399px;top:950px" width="12" height="12"><polygon points="6,1 11,6 6,11 1,6" fill="#000"/></svg><svg class="a" style="left:431px;top:942px" width="24" height="28"><path d="M5,12 V8 A6,6 0 0 1 17,8 V12" fill="none" stroke="#e4e4e4" stroke-width="3"/><rect x="1" y="12" width="20" height="14" rx="2" fill="#e4e4e4"/><rect x="9.5" y="17" width="3" height="6" fill="#333"/></svg><svg class="a" style="left:182px;top:943px" width="30" height="28"><rect x="2" y="2" width="26" height="24" fill="#e8e8e8"/><polygon points="2,16 12,26 2,26" fill="#555"/><path d="M2,16 L12,26" stroke="#222" stroke-width="1.5"/></svg><div class="a" style="left:509px;top:820px;width:956.0500000000002px;height:38px;background:#6892c2;"></div><div class="a" style="left:509px;top:821px;width:956.0500000000002px;height:2px;background:#8fb9e8;"></div><div class="a" style="left:509px;top:857px;width:956.0500000000002px;height:2px;background:#3f6088;"></div><div class="a" style="left:509px;top:859px;width:956.0500000000002px;height:38px;background:#6892c2;"></div><div class="a" style="left:509px;top:860px;width:956.0500000000002px;height:2px;background:#8fb9e8;"></div><div class="a" style="left:509px;top:896px;width:956.0500000000002px;height:2px;background:#3f6088;"></div><div class="a" style="left:509px;top:898px;width:956.0500000000002px;height:38px;background:#6892c2;"></div><div class="a" style="left:509px;top:899px;width:956.0500000000002px;height:2px;background:#8fb9e8;"></div><div class="a" style="left:509px;top:935px;width:956.0500000000002px;height:2px;background:#3f6088;"></div><div class="a" style="left:509px;top:937px;width:956.0500000000002px;height:38px;background:#7a7a7a;"></div><div class="a" style="left:509px;top:972px;width:956.0500000000002px;height:2px;background:#9a9a9a;"></div><div class="a" style="left:1465.1px;top:820px;width:304.9px;height:156px;background:#575757;overflow:hidden"><svg width="304.9" height="156"><rect x="1.0" y="0" width="2" height="156" fill="#686868"/><rect x="18.4" y="0" width="2" height="156" fill="#686868"/><rect x="35.8" y="0" width="2" height="156" fill="#686868"/><rect x="53.2" y="0" width="2" height="156" fill="#686868"/><rect x="70.6" y="0" width="2" height="156" fill="#686868"/><rect x="88.0" y="0" width="2" height="156" fill="#686868"/><rect x="105.3" y="0" width="2" height="156" fill="#686868"/><rect x="122.7" y="0" width="2" height="156" fill="#686868"/><rect x="140.1" y="0" width="2" height="156" fill="#686868"/><rect x="157.5" y="0" width="2" height="156" fill="#686868"/><rect x="174.9" y="0" width="2" height="156" fill="#686868"/><rect x="192.3" y="0" width="2" height="156" fill="#686868"/><rect x="209.7" y="0" width="2" height="156" fill="#686868"/><rect x="227.1" y="0" width="2" height="156" fill="#686868"/><rect x="244.5" y="0" width="2" height="156" fill="#686868"/><rect x="261.8" y="0" width="2" height="156" fill="#686868"/><rect x="279.2" y="0" width="2" height="156" fill="#686868"/><rect x="296.6" y="0" width="2" height="156" fill="#686868"/><rect x="0" y="39" width="304.9" height="2" fill="#636363"/><rect x="0" y="78" width="304.9" height="2" fill="#636363"/><rect x="0" y="117" width="304.9" height="2" fill="#636363"/><rect x="0" y="155" width="304.9" height="2" fill="#636363"/></svg></div><div class="a" style="left:141px;top:976px;width:1658px;height:48px;background:#474747;"></div><div class="a" style="left:141px;top:975px;width:1658px;height:1px;background:#3e3e3e;"></div><div class="a" style="left:141px;top:1024px;width:1658px;height:2px;background:#6e6e6e;"></div><div class="a" style="left:508px;top:976px;width:1px;height:48px;background:#5a5a5a;"></div><div class="a" style="left:1770px;top:820px;width:29px;height:204px;background:#3e3e3e;"></div><svg class="a" style="left:1774px;top:825px" width="20" height="195"><polygon points="10,2 17,12 3,12" fill="#7a7a7a"/><polygon points="3,178 17,178 10,188" fill="#7a7a7a"/></svg><div class="a" style="left:513px;top:841px;width:10px;height:10px;border-radius:50%;background:#050505"></div><svg class="a" style="left:1451px;top:840px" width="12" height="12"><polygon points="6,0 12,6 6,12 0,6" fill="#06091a"/></svg><div class="a" style="left:513px;top:879.5px;width:10px;height:10px;border-radius:50%;background:#050505"></div><svg class="a" style="left:1451px;top:878.5px" width="12" height="12"><polygon points="6,0 12,6 6,12 0,6" fill="#06091a"/></svg><div class="a" style="left:513px;top:918px;width:10px;height:10px;border-radius:50%;background:#050505"></div><svg class="a" style="left:1451px;top:917px" width="12" height="12"><polygon points="6,0 12,6 6,12 0,6" fill="#06091a"/></svg><div class="a" style="left:513px;top:957px;width:10px;height:10px;border-radius:50%;background:#050505"></div><svg class="a" style="left:926px;top:918px" width="12" height="12"><polygon points="6,0 12,6 6,12 0,6" fill="#06091a"/></svg><div class="a" style="left:1452px;top:953px;width:7px;height:14px;border:2px solid #000;"></div><div class="a" style="left:888px;top:770px;width:21px;height:47px;border:3px solid #c42630;background:rgba(150,50,50,0.45)"></div><div class="a" style="left:896px;top:817px;width:2.5px;height:206px;background:#c8202c;"></div><div class="a" style="left:509px;top:1030px;width:2px;height:40px;background:#6a6a6a;"></div><div class="a" style="left:727px;top:1030px;width:2px;height:40px;background:#6a6a6a;"></div><div class="a" style="left:835px;top:1030px;width:2px;height:40px;background:#6a6a6a;"></div><div class="a" style="left:1015px;top:1030px;width:2px;height:40px;background:#6a6a6a;"></div><div class="a" style="left:141px;top:1073px;width:1658px;height:3px;background:#2a2a2a;"></div><svg class="a" style="left:0;top:0" width="1920" height="1080"><rect x="152" y="1037" width="21" height="24" fill="#e0e0e0"/><polygon points="152,1052 162,1062 152,1062" fill="#535353"/><path d="M152,1052 L162,1062" stroke="#222" stroke-width="1.5"/><path d="M194,1043 h10 l3,3 h14 v16 h-27 z" fill="#e0e0e0"/><rect x="247" y="1035" width="14" height="4" rx="1" fill="none" stroke="#e0e0e0" stroke-width="2"/><rect x="242" y="1039" width="24" height="3" fill="#e0e0e0"/><path d="M245,1042 h18 l-2,20 h-14 z" fill="#e0e0e0"/><path d="M249,1045 v14 M254,1045 v14 M259,1045 v14" stroke="#535353" stroke-width="2"/><rect x="432" y="1041" width="17" height="17" fill="#e0e0e0"/><polygon points="448,1049 458,1041 458,1058" fill="#e0e0e0"/><rect x="484" y="1034" width="2" height="24" fill="#e0e0e0"/><rect x="489" y="1034" width="2" height="24" fill="#e0e0e0"/><rect x="494" y="1034" width="2" height="24" fill="#e0e0e0"/><rect x="527" y="1038" width="4" height="18" fill="#e0e0e0"/><polygon points="531,1047 550,1038 550,1056" fill="#e0e0e0"/><polygon points="566,1047 583,1038 583,1056" fill="#e0e0e0"/><rect x="586" y="1038" width="4" height="18" fill="#e0e0e0"/><polygon points="607,1037 627,1047 607,1057" fill="#e0e0e0"/><rect x="643" y="1038" width="4" height="18" fill="#e0e0e0"/><polygon points="651,1038 668,1047 651,1056" fill="#e0e0e0"/><polygon points="684,1038 703,1047 684,1056" fill="#e0e0e0"/><rect x="703" y="1038" width="4" height="18" fill="#e0e0e0"/><rect x="745" y="1042" width="25" height="9" fill="#e0e0e0"/><rect x="756" y="1035" width="3" height="24" fill="#e0e0e0"/><rect x="748" y="1045" width="19" height="3" fill="#535353"/><path d="M789,1046 v12 h25 v-6" fill="none" stroke="#e0e0e0" stroke-width="4"/><path d="M792,1050 q4,-9 14,-9 v-5 l9,8 l-9,8 v-5 q-8,0 -14,3z" fill="#e0e0e0"/><rect x="853" y="1037" width="12" height="10" fill="#999"/><rect x="858" y="1043" width="19" height="18" fill="#e0e0e0"/><rect x="892" y="1036" width="13" height="13" fill="none" stroke="#e0e0e0" stroke-width="2.5"/><rect x="900" y="1044" width="14" height="14" fill="#535353" stroke="#e0e0e0" stroke-width="2.5"/><rect x="931" y="1037" width="9" height="20" fill="#e0e0e0"/><rect x="941" y="1041" width="9" height="20" fill="#e0e0e0"/><rect x="934" y="1052" width="3" height="3" fill="#333"/><rect x="944" y="1055" width="3" height="3" fill="#333"/><path d="M972,1036 h-4 v20 h4 M986,1036 h4 v14" fill="none" stroke="#e0e0e0" stroke-width="2.5"/><circle cx="979" cy="1045" r="2" fill="#e0e0e0"/><polygon points="982,1052 992,1052 987,1059" fill="#e0e0e0"/><rect x="1279.5" y="1034.5" width="198" height="28" fill="#3c3c3c" stroke="#2a2a2a" stroke-width="1.5"/><rect x="1312" y="1036" width="53" height="25" fill="#555" stroke="#262626" stroke-width="2"/><polygon points="1300,1048 1307,1042 1307,1055" fill="#e0e0e0"/><polygon points="1467,1048 1460,1042 1460,1055" fill="#e0e0e0"/><path d="M1508,1049 A10,10 0 1 1 1516,1058" fill="none" stroke="#e0e0e0" stroke-width="4"/><polygon points="1502,1046 1514,1046 1508,1055" fill="#e0e0e0"/><rect x="1504" y="1061" width="26" height="3" fill="#e0e0e0"/><polygon points="1553,1054 1562,1047 1566,1050 1569,1048 1574,1054" fill="#e0e0e0"/><rect x="1599.5" y="1047.5" width="107" height="8" fill="#333" stroke="#222" stroke-width="1.5"/><path d="M1648,1048 L1655,1040 L1663,1048 V1058 H1648 Z" fill="#6a6a6a" stroke="#2a2a2a" stroke-width="1.5"/><polygon points="1727,1056 1742,1042 1748,1048 1753,1042 1765,1056" fill="#e0e0e0"/><polygon points="1734,1054 1742,1046 1750,1054" fill="#9a9a9a"/><polygon points="1745,1054 1753,1045 1761,1054" fill="#bdbdbd"/></svg><div class="t" style="left:1034px;top:1036.8px;font-size:20px;line-height:20px;color:#f0c030;font-weight:bold;">23</div><div class="a" style="left:1034px;top:1059px;width:22px;height:2px;background:transparent;border-top:2px dotted #c8a030;height:0"></div><div class="t" style="left:1105px;top:1036px;font-size:21px;line-height:21px;color:#9c9c9c;font-weight:normal;">24.00 fps</div><div class="a" style="left:1105px;top:1059px;width:88px;height:0px;background:transparent;border-top:2px dotted #777"></div><div class="t" style="left:1210px;top:1036px;font-size:21px;line-height:21px;color:#f0c030;font-weight:bold;">0.9</div><div class="t" style="left:1244px;top:1036px;font-size:21px;line-height:21px;color:#dddddd;font-weight:bold;">s</div><div class="a" style="left:1210px;top:1059px;width:30px;height:0px;background:transparent;border-top:2px dotted #c8a030"></div>
<svg class="a" style="left:0;top:0" width="1920" height="1080"><rect x="1503.5" y="495" width="3" height="306" fill="#d46868"/><circle cx="1505" cy="463" r="36" fill="#d9605c" stroke="#b34a48" stroke-width="2.5"/><path d="M1496.5,446 V477 H1503 Q1520,477 1520,461.5 Q1520,446 1503,446 Z" fill="none" stroke="#fff" stroke-width="6"/><rect x="346.5" y="976" width="3" height="104" fill="#d46868"/><rect x="1414.5" y="976" width="3" height="104" fill="#d46868"/><path d="M844,1080 V995.5 H897" fill="none" stroke="#d46868" stroke-width="3"/></svg>
<div class="t" style="left:1561px;top:434px;font-size:53px;line-height:53px;color:#26353d;letter-spacing:0.5px">Timeline</div>
<div class="t" style="left:1564px;top:491px;font-size:53px;line-height:53px;color:#26353d;letter-spacing:-1.5px">header</div>
</body></html>
